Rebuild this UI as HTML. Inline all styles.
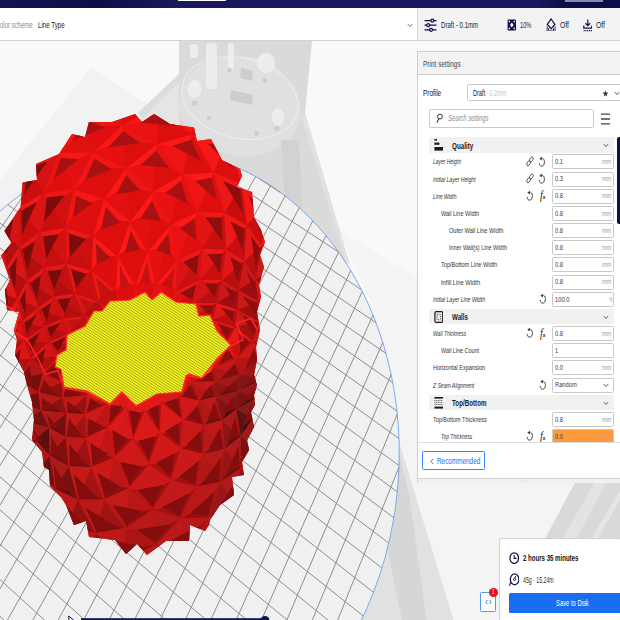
<!DOCTYPE html>
<html><head><meta charset="utf-8"><title>Cura</title>
<style>
html,body{margin:0;padding:0;}
body{width:620px;height:620px;overflow:hidden;position:relative;background:#f8f8f8;font-family:"Liberation Sans",sans-serif;}
.a{position:absolute;}
.t{position:absolute;white-space:nowrap;transform-origin:0 50%;line-height:12px;height:12px;}

</style></head><body>
<svg width="620" height="620" viewBox="0 0 620 620" style="position:absolute;left:0;top:0">
<defs><pattern id="fine" width="1" height="1" patternUnits="userSpaceOnUse" patternTransform="matrix(1.75,1.26,-0.95,2.05,0,0)"><rect width="1" height="1" fill="#f3f3f3"/><path d="M0 0H1M0 0V1" stroke="#e8e8e8" stroke-width="0.25"/></pattern>
<pattern id="yl" width="2.3" height="2.3" patternUnits="userSpaceOnUse" patternTransform="rotate(33)"><rect width="2.3" height="2.3" fill="#f2f220"/><rect width="2.3" height="0.6" fill="#8a8a10"/></pattern>
<clipPath id="blobclip"><polygon points="0.6,256.0 11.6,243.0 4.5,231.0 20.6,207.0 22.6,182.6 37.0,180.0 36.0,164.0 59.0,154.0 72.0,134.0 85.0,137.0 89.0,122.0 112.0,122.0 135.0,114.0 142.0,122.0 154.0,114.0 170.0,124.0 194.0,127.5 197.0,141.0 211.0,139.0 222.0,160.0 240.0,169.0 242.0,176.0 237.0,187.0 252.0,192.0 254.0,217.0 261.0,230.0 265.0,242.0 260.0,255.0 264.0,267.0 259.0,285.0 261.0,297.0 257.0,312.0 260.0,330.0 256.0,347.0 257.0,360.0 254.0,375.0 257.0,385.0 254.0,395.0 255.0,405.0 251.0,412.0 254.0,427.0 247.0,440.0 249.0,450.0 242.0,462.0 244.0,475.0 232.0,477.0 234.0,495.0 220.0,505.0 210.0,520.0 209.0,525.0 205.0,531.0 190.0,525.0 189.0,541.0 166.0,541.0 147.0,555.0 137.0,544.0 126.0,554.0 115.0,540.0 89.0,537.0 86.0,521.0 74.0,525.0 66.0,505.0 61.0,497.0 50.0,486.0 49.0,470.0 44.0,467.0 42.0,452.0 32.0,440.0 34.0,420.0 32.0,402.0 27.0,385.0 24.0,372.0 15.0,355.0 17.0,340.0 14.0,330.0 19.0,312.0 7.0,310.0 5.0,290.0 10.0,280.0 1.0,255.0"/></clipPath>
</defs>
<rect width="620" height="620" fill="#f9f9f9"/>
<polygon points="338,229 620,402 620,620 340,620 400,460 370,300" fill="#f4f4f4"/><polygon points="91.6,67 0,180 0,262 60,200 150,106" fill="#f2f2f2"/><polygon points="179,82 179,135 120,128 142.4,118" fill="#e5e5e5"/><polygon points="179,74 179,82.5 142.4,118.5 138,112.7" fill="#dcdcdc"/><polygon points="179,40.5 312,40.5 305,113 349.7,264.5 300,230 240,170 179,135" fill="#dadada"/><polygon points="305,113 349.7,264.5 346,262 301.5,118" fill="#e1e1e1"/><ellipse cx="240" cy="106" rx="61" ry="50" transform="rotate(12 240 106)" fill="#e0e0e0"/><ellipse cx="240" cy="98" rx="59" ry="40" transform="rotate(14 240 98)" fill="none" stroke="#ebebeb" stroke-width="1.2"/><polygon points="281,140 299,140 303,225 285,205" fill="#d2d2d2"/><g fill="#ededed"><rect x="206" y="43" width="11" height="46" rx="4"/><rect x="228" y="43" width="6" height="27" rx="3"/><ellipse cx="194.5" cy="89" rx="7" ry="9"/><ellipse cx="266" cy="63" rx="9" ry="10"/><ellipse cx="278" cy="117" rx="6" ry="9"/><rect x="190" y="44" width="8" height="14" rx="3"/></g><g fill="#cdcdcd"><polygon points="241,68 253,71 252,81 240,78"/><polygon points="231,90 253,95 252,105 230,100"/><circle cx="194.5" cy="103" r="2.6"/><circle cx="209" cy="118" r="2.2"/><circle cx="256.5" cy="133.5" r="2.4"/><circle cx="277" cy="128.5" r="2.6"/><circle cx="264.5" cy="80.5" r="2.4"/><circle cx="229.5" cy="70" r="2.2"/></g><polygon points="396,430 398.5,440 453.5,620 340,620 392,540" fill="#e1e1e1"/><polygon points="399,452 403,470 409.5,496 426.5,620 402,620 388,552 394,500" fill="#d6d6d6"/><polygon points="574.8,483 620,483 620,538 545.5,538" fill="#d9d9d9"/><polygon points="594,483 606,483 577,538 563,538" fill="#e3e3e3"/><polygon points="620,490 620,500 598,538 592,538" fill="#e6e6e6"/>
<polygon points="373.3,592.8 366.5,609.0 359.0,625.0 350.7,640.5 341.6,655.5 331.8,670.0 321.2,683.9 310.0,697.1 298.1,709.5 285.6,721.2 272.5,732.0 258.8,741.8 244.7,750.7 230.1,758.6 215.2,765.4 199.9,771.0 184.4,775.6 168.8,778.9 153.0,781.1 137.1,782.0 121.3,781.8 105.5,780.3 89.9,777.6 74.6,773.8 59.5,768.8 44.8,762.7 30.5,755.4 16.7,747.1 3.4,737.8 -9.4,727.6 -21.5,716.5 -32.9,704.5 -43.7,691.7 -53.8,678.2 -63.1,664.1 -71.6,649.4 -79.3,634.2 -86.3,618.5 -92.4,602.5 -97.8,586.1 -102.3,569.5 -106.1,552.7 -109.0,535.8 -111.2,518.8 -112.5,501.9 -113.2,484.9 -113.1,468.1 -112.3,451.4 -110.7,434.8 -108.5,418.5 -105.7,402.5 -102.2,386.8 -98.1,371.4 -93.5,356.4 -88.3,341.8 -82.6,327.6 -76.3,313.8 -69.6,300.5 -62.5,287.7 -54.9,275.4 -47.0,263.6 -38.6,252.4 -29.9,241.7 -20.9,231.5 -11.6,221.9 -2.0,212.9 7.8,204.5 17.9,196.7 28.2,189.4 38.7,182.8 49.3,176.7 60.1,171.3 71.1,166.5 82.1,162.2 93.3,158.6 104.5,155.7 115.8,153.3 127.1,151.5 138.5,150.4 149.8,149.9 161.2,150.0 172.5,150.7 183.7,152.1 194.9,154.1 206.0,156.7 217.0,159.9 227.9,163.7 238.6,168.1 249.2,173.2 259.6,178.8 269.8,185.1 279.7,192.0 289.5,199.4 299.0,207.5 308.1,216.1 317.0,225.4 325.6,235.2 333.8,245.5 341.7,256.5 349.1,267.9 356.2,279.9 362.8,292.4 368.9,305.4 374.5,318.9 379.6,332.9 384.2,347.3 388.2,362.1 391.7,377.3 394.5,392.8 396.7,408.7 398.2,424.8 399.1,441.3 399.2,457.9 398.6,474.7 397.3,491.6 395.3,508.6 392.4,525.6 388.8,542.6 384.5,559.5 379.3,576.2" fill="url(#fine)" stroke="#6ea3ee" stroke-width="0.9"/>
<g stroke="#8e8e8e" stroke-width="1"><line x1="-26.9" y1="238.1" x2="-65.0" y2="292.0"/><line x1="27.1" y1="190.2" x2="-97.7" y2="369.8"/><line x1="60.0" y1="171.4" x2="-108.5" y2="418.3"/><line x1="87.0" y1="160.6" x2="-112.7" y2="458.7"/><line x1="110.9" y1="154.2" x2="-112.9" y2="494.5"/><line x1="132.7" y1="150.9" x2="-110.2" y2="527.2"/><line x1="153.0" y1="149.9" x2="-105.1" y2="557.4"/><line x1="172.1" y1="150.7" x2="-98.0" y2="585.5"/><line x1="190.2" y1="153.2" x2="-89.0" y2="611.8"/><line x1="207.5" y1="157.0" x2="-78.3" y2="636.3"/><line x1="224.1" y1="162.3" x2="-66.1" y2="659.1"/><line x1="240.2" y1="168.8" x2="-52.3" y2="680.2"/><line x1="255.6" y1="176.6" x2="-37.1" y2="699.7"/><line x1="270.6" y1="185.7" x2="-20.5" y2="717.4"/><line x1="285.1" y1="196.0" x2="-2.4" y2="733.4"/><line x1="299.2" y1="207.7" x2="17.0" y2="747.4"/><line x1="312.8" y1="220.9" x2="37.9" y2="759.3"/><line x1="326.0" y1="235.6" x2="60.2" y2="769.0"/><line x1="338.6" y1="252.1" x2="83.9" y2="776.3"/><line x1="350.8" y1="270.6" x2="109.1" y2="780.7"/><line x1="362.3" y1="291.5" x2="135.9" y2="782.0"/><line x1="373.0" y1="315.1" x2="164.4" y2="779.6"/><line x1="382.8" y1="342.4" x2="194.8" y2="772.7"/><line x1="391.1" y1="374.6" x2="227.5" y2="759.9"/><line x1="397.3" y1="414.0" x2="263.4" y2="738.7"/><line x1="399.0" y1="467.0" x2="304.6" y2="702.9"/><line x1="259.0" y1="178.5" x2="280.3" y2="192.4"/><line x1="188.2" y1="152.8" x2="338.6" y2="252.1"/><line x1="152.4" y1="149.9" x2="361.3" y2="289.6"/><line x1="124.2" y1="151.9" x2="375.9" y2="322.6"/><line x1="99.9" y1="156.8" x2="385.9" y2="353.3"/><line x1="78.3" y1="163.6" x2="392.7" y2="382.6"/><line x1="58.6" y1="172.0" x2="396.9" y2="411.0"/><line x1="40.4" y1="181.7" x2="399.0" y2="438.5"/><line x1="23.5" y1="192.6" x2="399.0" y2="465.5"/><line x1="7.7" y1="204.6" x2="397.3" y2="491.9"/><line x1="-7.2" y1="217.7" x2="393.8" y2="517.7"/><line x1="-21.2" y1="231.8" x2="388.7" y2="543.1"/><line x1="-34.4" y1="247.0" x2="381.9" y2="568.0"/><line x1="-46.7" y1="263.3" x2="373.5" y2="592.3"/><line x1="-58.3" y1="280.7" x2="363.3" y2="616.0"/><line x1="-69.0" y1="299.4" x2="351.5" y2="639.1"/><line x1="-78.9" y1="319.3" x2="337.7" y2="661.4"/><line x1="-87.9" y1="340.7" x2="322.1" y2="682.8"/><line x1="-95.8" y1="363.6" x2="304.3" y2="703.2"/><line x1="-102.6" y1="388.3" x2="284.3" y2="722.3"/><line x1="-108.0" y1="415.1" x2="261.8" y2="739.8"/><line x1="-111.7" y1="444.3" x2="236.3" y2="755.4"/><line x1="-113.2" y1="476.6" x2="207.5" y2="768.4"/><line x1="-111.7" y1="512.8" x2="174.3" y2="777.9"/><line x1="-105.7" y1="554.7" x2="135.2" y2="782.1"/><line x1="-91.0" y1="606.5" x2="86.1" y2="776.8"/><line x1="-42.0" y1="693.9" x2="1.2" y2="736.2"/></g>
<polygon points="0.6,256.0 11.6,243.0 4.5,231.0 20.6,207.0 22.6,182.6 37.0,180.0 36.0,164.0 59.0,154.0 72.0,134.0 85.0,137.0 89.0,122.0 112.0,122.0 135.0,114.0 142.0,122.0 154.0,114.0 170.0,124.0 194.0,127.5 197.0,141.0 211.0,139.0 222.0,160.0 240.0,169.0 242.0,176.0 237.0,187.0 252.0,192.0 254.0,217.0 261.0,230.0 265.0,242.0 260.0,255.0 264.0,267.0 259.0,285.0 261.0,297.0 257.0,312.0 260.0,330.0 256.0,347.0 257.0,360.0 254.0,375.0 257.0,385.0 254.0,395.0 255.0,405.0 251.0,412.0 254.0,427.0 247.0,440.0 249.0,450.0 242.0,462.0 244.0,475.0 232.0,477.0 234.0,495.0 220.0,505.0 210.0,520.0 209.0,525.0 205.0,531.0 190.0,525.0 189.0,541.0 166.0,541.0 147.0,555.0 137.0,544.0 126.0,554.0 115.0,540.0 89.0,537.0 86.0,521.0 74.0,525.0 66.0,505.0 61.0,497.0 50.0,486.0 49.0,470.0 44.0,467.0 42.0,452.0 32.0,440.0 34.0,420.0 32.0,402.0 27.0,385.0 24.0,372.0 15.0,355.0 17.0,340.0 14.0,330.0 19.0,312.0 7.0,310.0 5.0,290.0 10.0,280.0 1.0,255.0" fill="#e51414"/><g clip-path="url(#blobclip)"><polygon points="227.2,357.0 208.7,355.5 226.6,343.3" fill="#e41919"/><polygon points="227.2,357.0 226.6,343.3 237.4,357.8" fill="#de1717"/><polygon points="227.2,357.0 237.4,357.8 214.8,368.1" fill="#b40f0f"/><polygon points="227.2,357.0 214.8,368.1 208.7,355.5" fill="#d31515"/><polygon points="233.5,357.5 227.1,348.8 219.0,363.9" fill="#8e0e0e"/><polygon points="206.2,377.5 189.0,370.4 214.8,368.1" fill="#ca1919"/><polygon points="206.2,377.5 214.8,368.1 215.7,381.5" fill="#a31313"/><polygon points="206.2,377.5 215.7,381.5 191.8,381.9" fill="#8f1111"/><polygon points="206.2,377.5 191.8,381.9 189.0,370.4" fill="#c21818"/><polygon points="213.9,380.7 211.3,372.0 196.3,379.9" fill="#860d0d"/><polygon points="189.5,392.4 172.1,377.5 191.8,381.9" fill="#ca1919"/><polygon points="189.5,392.4 191.8,381.9 199.1,400.7" fill="#9e1313"/><polygon points="189.5,392.4 199.1,400.7 179.4,396.2" fill="#7f0f0f"/><polygon points="189.5,392.4 179.4,396.2 172.1,377.5" fill="#ca1919"/><polygon points="197.3,399.1 189.3,384.8 183.1,394.6" fill="#860d0d"/><polygon points="173.4,404.7 157.3,378.3 179.4,396.2" fill="#d61919"/><polygon points="173.4,404.7 179.4,396.2 182.3,419.2" fill="#9a1010"/><polygon points="173.4,404.7 182.3,419.2 161.5,402.1" fill="#980f0f"/><polygon points="173.4,404.7 161.5,402.1 157.3,378.3" fill="#d61919"/><polygon points="180.6,416.4 176.5,398.8 165.4,402.1" fill="#860d0d"/><polygon points="155.0,412.9 146.4,376.9 161.5,402.1" fill="#e21919"/><polygon points="155.0,412.9 161.5,402.1 159.7,432.7" fill="#ab0f0f"/><polygon points="155.0,412.9 159.7,432.7 144.6,410.2" fill="#b11010"/><polygon points="155.0,412.9 144.6,410.2 146.4,376.9" fill="#e21919"/><polygon points="158.8,429.0 158.7,404.8 148.4,409.8" fill="#860d0d"/><polygon points="134.5,418.6 137.5,381.3 144.6,410.2" fill="#e21919"/><polygon points="134.5,418.6 144.6,410.2 132.9,439.0" fill="#a70e0e"/><polygon points="134.5,418.6 132.9,439.0 126.3,406.8" fill="#c01212"/><polygon points="134.5,418.6 126.3,406.8 137.5,381.3" fill="#e21919"/><polygon points="133.2,435.1 140.9,412.6 129.3,410.5" fill="#860d0d"/><polygon points="114.9,410.4 127.5,380.0 126.3,406.8" fill="#dc1818"/><polygon points="114.9,410.4 126.3,406.8 107.9,427.2" fill="#a70e0e"/><polygon points="114.9,410.4 107.9,427.2 106.7,404.2" fill="#c41313"/><polygon points="114.9,410.4 106.7,404.2 127.5,380.0" fill="#e21919"/><polygon points="109.2,424.0 122.7,406.1 110.6,405.3" fill="#860d0d"/><polygon points="93.2,404.7 108.0,387.3 106.7,404.2" fill="#bf1515"/><polygon points="93.2,404.7 106.7,404.2 85.0,414.2" fill="#940e0e"/><polygon points="93.2,404.7 85.0,414.2 86.8,395.3" fill="#ca1717"/><polygon points="93.2,404.7 86.8,395.3 108.0,387.3" fill="#d41919"/><polygon points="86.5,412.4 101.4,404.7 90.2,398.1" fill="#860d0d"/><polygon points="70.5,392.5 86.4,382.8 86.8,395.3" fill="#a11313"/><polygon points="70.5,392.5 86.8,395.3 61.8,397.8" fill="#810e0e"/><polygon points="70.5,392.5 61.8,397.8 62.5,382.0" fill="#c81919"/><polygon points="70.5,392.5 62.5,382.0 86.4,382.8" fill="#c81919"/><polygon points="63.4,396.8 81.2,394.0 65.8,386.2" fill="#860d0d"/><polygon points="52.8,370.8 70.9,366.5 62.5,382.0" fill="#8f1010"/><polygon points="52.8,370.8 62.5,382.0 42.8,373.2" fill="#830e0e"/><polygon points="52.8,370.8 42.8,373.2 57.2,356.4" fill="#c81919"/><polygon points="52.8,370.8 57.2,356.4 70.9,366.5" fill="#b61616"/><polygon points="44.7,372.7 58.4,377.8 55.6,361.9" fill="#860d0d"/><polygon points="58.3,343.4 76.8,344.9 57.2,356.4" fill="#b60e0e"/><polygon points="58.3,343.4 57.2,356.4 48.1,342.6" fill="#c51212"/><polygon points="58.3,343.4 48.1,342.6 69.5,333.0" fill="#e21919"/><polygon points="58.3,343.4 69.5,333.0 76.8,344.9" fill="#cb1313"/><polygon points="52.0,342.9 57.9,351.2 65.7,336.9" fill="#7a0c0c"/><polygon points="74.3,322.7 93.7,330.8 69.5,333.0" fill="#b40e0e"/><polygon points="74.3,322.7 69.5,333.0 63.6,318.2" fill="#d11515"/><polygon points="74.3,322.7 63.6,318.2 84.7,316.0" fill="#e21919"/><polygon points="74.3,322.7 84.7,316.0 93.7,330.8" fill="#c21111"/><polygon points="67.7,319.9 72.3,329.1 81.5,318.9" fill="#c41212"/><polygon points="86.6,304.3 109.6,323.9 84.7,316.0" fill="#b40e0e"/><polygon points="86.6,304.3 84.7,316.0 74.0,293.5" fill="#da1717"/><polygon points="86.6,304.3 74.0,293.5 98.6,301.4" fill="#e21919"/><polygon points="86.6,304.3 98.6,301.4 109.6,323.9" fill="#ba0f0f"/><polygon points="78.8,297.6 86.2,312.0 94.6,303.1" fill="#c41212"/><polygon points="102.6,288.7 122.5,321.4 98.6,301.4" fill="#c80e0e"/><polygon points="102.6,288.7 98.6,301.4 91.6,270.8" fill="#ee1919"/><polygon points="102.6,288.7 91.6,270.8 115.8,291.3" fill="#ee1919"/><polygon points="102.6,288.7 115.8,291.3 122.5,321.4" fill="#c90e0e"/><polygon points="95.8,277.6 100.9,297.7 111.2,291.0" fill="#c41212"/><polygon points="123.4,280.4 133.8,324.0 115.8,291.3" fill="#dd0e0e"/><polygon points="123.4,280.4 115.8,291.3 117.7,256.4" fill="#fc1919"/><polygon points="123.4,280.4 117.7,256.4 135.1,286.1" fill="#fc1919"/><polygon points="123.4,280.4 135.1,286.1 133.8,324.0" fill="#dc0e0e"/><polygon points="119.9,265.6 120.2,288.6 130.0,286.0" fill="#c41212"/><polygon points="145.9,276.1 142.3,320.9 135.1,286.1" fill="#e00f0f"/><polygon points="145.9,276.1 135.1,286.1 147.9,251.4" fill="#fc1919"/><polygon points="145.9,276.1 147.9,251.4 155.6,285.5" fill="#f81717"/><polygon points="145.9,276.1 155.6,285.5 142.3,320.9" fill="#dd0e0e"/><polygon points="147.2,260.8 140.1,283.1 150.6,283.5" fill="#c41212"/><polygon points="169.0,280.3 153.7,317.1 155.6,285.5" fill="#e51111"/><polygon points="169.0,280.3 155.6,285.5 177.4,260.1" fill="#fc1919"/><polygon points="169.0,280.3 177.4,260.1 175.7,291.9" fill="#f01515"/><polygon points="169.0,280.3 175.7,291.9 153.7,317.1" fill="#df0f0f"/><polygon points="174.2,267.9 161.2,285.0 171.8,287.8" fill="#c41212"/><polygon points="189.3,292.4 169.7,315.4 175.7,291.9" fill="#da1313"/><polygon points="189.3,292.4 175.7,291.9 200.1,279.8" fill="#f01919"/><polygon points="189.3,292.4 200.1,279.8 195.3,302.9" fill="#d61212"/><polygon points="189.3,292.4 195.3,302.9 169.7,315.4" fill="#cc1010"/><polygon points="196.0,284.6 180.1,293.1 192.4,299.4" fill="#8e0e0e"/><polygon points="207.7,308.6 191.5,318.6 195.3,302.9" fill="#d81616"/><polygon points="207.7,308.6 195.3,302.9 216.7,303.1" fill="#e41919"/><polygon points="207.7,308.6 216.7,303.1 213.0,319.9" fill="#b71010"/><polygon points="207.7,308.6 213.0,319.9 191.5,318.6" fill="#bb1010"/><polygon points="213.3,305.2 199.6,305.4 210.1,315.8" fill="#8e0e0e"/><polygon points="225.4,329.6 207.3,334.0 213.0,319.9" fill="#e11818"/><polygon points="225.4,329.6 213.0,319.9 235.3,327.3" fill="#e41919"/><polygon points="225.4,329.6 235.3,327.3 226.6,343.3" fill="#b00e0e"/><polygon points="225.4,329.6 226.6,343.3 207.3,334.0" fill="#c21212"/><polygon points="231.5,328.2 217.6,323.6 226.3,337.8" fill="#8e0e0e"/><polygon points="231.5,372.1 214.8,368.1 237.4,357.8" fill="#c21919"/><polygon points="231.5,372.1 237.4,357.8 240.7,374.3" fill="#ad1616"/><polygon points="231.5,372.1 240.7,374.3 215.7,381.5" fill="#861111"/><polygon points="231.5,372.1 215.7,381.5 214.8,368.1" fill="#af1616"/><polygon points="238.9,373.9 234.5,363.6 221.7,378.1" fill="#860d0d"/><polygon points="207.4,391.5 191.8,381.9 215.7,381.5" fill="#c21919"/><polygon points="207.4,391.5 215.7,381.5 216.0,396.8" fill="#9a1313"/><polygon points="207.4,391.5 216.0,396.8 199.1,400.7" fill="#750e0e"/><polygon points="207.4,391.5 199.1,400.7 191.8,381.9" fill="#b71717"/><polygon points="214.4,395.7 211.0,384.9 201.4,396.3" fill="#860d0d"/><polygon points="195.2,414.8 179.4,396.2 199.1,400.7" fill="#ce1919"/><polygon points="195.2,414.8 199.1,400.7 203.9,425.1" fill="#ab1313"/><polygon points="195.2,414.8 203.9,425.1 182.3,419.2" fill="#900f0f"/><polygon points="195.2,414.8 182.3,419.2 179.4,396.2" fill="#ce1919"/><polygon points="202.2,423.1 197.4,405.8 187.0,417.1" fill="#860d0d"/><polygon points="173.8,431.8 161.5,402.1 182.3,419.2" fill="#da1919"/><polygon points="173.8,431.8 182.3,419.2 180.5,448.2" fill="#ac1010"/><polygon points="173.8,431.8 180.5,448.2 159.7,432.7" fill="#aa1010"/><polygon points="173.8,431.8 159.7,432.7 161.5,402.1" fill="#da1919"/><polygon points="179.2,445.0 178.5,423.0 164.9,431.3" fill="#860d0d"/><polygon points="147.3,445.1 144.6,410.2 159.7,432.7" fill="#da1919"/><polygon points="147.3,445.1 159.7,432.7 148.8,464.3" fill="#a60f0f"/><polygon points="147.3,445.1 148.8,464.3 132.9,439.0" fill="#b61212"/><polygon points="147.3,445.1 132.9,439.0 144.6,410.2" fill="#da1919"/><polygon points="148.5,460.5 155.0,436.5 138.4,440.7" fill="#860d0d"/><polygon points="118.4,439.5 126.3,406.8 132.9,439.0" fill="#d51818"/><polygon points="118.4,439.5 132.9,439.0 114.0,457.4" fill="#9e0e0e"/><polygon points="118.4,439.5 114.0,457.4 107.9,427.2" fill="#c51515"/><polygon points="118.4,439.5 107.9,427.2 126.3,406.8" fill="#da1919"/><polygon points="114.9,453.9 127.3,438.6 112.4,430.1" fill="#860d0d"/><polygon points="93.3,426.0 106.7,404.2 107.9,427.2" fill="#ba1616"/><polygon points="93.3,426.0 107.9,427.2 85.9,438.0" fill="#8b0e0e"/><polygon points="93.3,426.0 85.9,438.0 85.0,414.2" fill="#c21717"/><polygon points="93.3,426.0 85.0,414.2 106.7,404.2" fill="#cc1919"/><polygon points="87.4,435.6 102.6,426.1 88.4,418.6" fill="#860d0d"/><polygon points="73.5,406.7 86.8,395.3 85.0,414.2" fill="#961212"/><polygon points="73.5,406.7 85.0,414.2 66.2,412.9" fill="#760e0e"/><polygon points="73.5,406.7 66.2,412.9 61.8,397.8" fill="#bb1818"/><polygon points="73.5,406.7 61.8,397.8 86.8,395.3" fill="#c01919"/><polygon points="67.6,411.6 81.0,410.8 67.1,401.1" fill="#860d0d"/><polygon points="46.6,388.5 62.5,382.0 61.8,397.8" fill="#8c1111"/><polygon points="46.6,388.5 61.8,397.8 37.9,392.1" fill="#760e0e"/><polygon points="46.6,388.5 37.9,392.1 42.8,373.2" fill="#c01919"/><polygon points="46.6,388.5 42.8,373.2 62.5,382.0" fill="#bd1818"/><polygon points="39.6,391.4 55.8,394.4 43.9,379.4" fill="#860d0d"/><polygon points="40.0,357.7 57.2,356.4 42.8,373.2" fill="#b70f0f"/><polygon points="40.0,357.7 42.8,373.2 30.6,358.4" fill="#bc1010"/><polygon points="40.0,357.7 30.6,358.4 48.1,342.6" fill="#e21919"/><polygon points="40.0,357.7 48.1,342.6 57.2,356.4" fill="#d31515"/><polygon points="34.3,358.2 41.7,367.0 45.1,348.4" fill="#7a0c0c"/><polygon points="52.7,328.9 69.5,333.0 48.1,342.6" fill="#b40e0e"/><polygon points="52.7,328.9 48.1,342.6 43.5,326.7" fill="#c81313"/><polygon points="52.7,328.9 43.5,326.7 63.6,318.2" fill="#e21919"/><polygon points="52.7,328.9 63.6,318.2 69.5,333.0" fill="#ca1313"/><polygon points="47.2,327.6 50.6,337.1 60.5,322.7" fill="#7a0c0c"/><polygon points="64.4,303.5 84.7,316.0 63.6,318.2" fill="#b40e0e"/><polygon points="64.4,303.5 63.6,318.2 53.3,296.7" fill="#cb1313"/><polygon points="64.4,303.5 53.3,296.7 74.0,293.5" fill="#e21919"/><polygon points="64.4,303.5 74.0,293.5 84.7,316.0" fill="#c11111"/><polygon points="57.7,299.4 64.7,313.0 70.6,297.7" fill="#7a0c0c"/><polygon points="77.9,277.1 98.6,301.4 74.0,293.5" fill="#c80e0e"/><polygon points="77.9,277.1 74.0,293.5 66.5,263.7" fill="#e41616"/><polygon points="77.9,277.1 66.5,263.7 91.6,270.8" fill="#ee1919"/><polygon points="77.9,277.1 91.6,270.8 98.6,301.4" fill="#cd0f0f"/><polygon points="71.0,269.0 76.1,287.9 86.7,273.9" fill="#7a0c0c"/><polygon points="101.0,255.6 115.8,291.3 91.6,270.8" fill="#dd0e0e"/><polygon points="101.0,255.6 91.6,270.8 92.9,235.9" fill="#fb1818"/><polygon points="101.0,255.6 92.9,235.9 117.7,256.4" fill="#fc1919"/><polygon points="101.0,255.6 117.7,256.4 115.8,291.3" fill="#dc0e0e"/><polygon points="96.1,243.6 96.7,264.7 110.2,257.7" fill="#a81111"/><polygon points="131.9,244.6 135.1,286.1 117.7,256.4" fill="#df0f0f"/><polygon points="131.9,244.6 117.7,256.4 130.1,221.8" fill="#fc1919"/><polygon points="131.9,244.6 130.1,221.8 147.9,251.4" fill="#f71717"/><polygon points="131.9,244.6 147.9,251.4 135.1,286.1" fill="#dc0e0e"/><polygon points="130.8,230.8 124.8,252.9 140.1,249.6" fill="#a81111"/><polygon points="165.0,246.5 155.6,285.5 147.9,251.4" fill="#e41111"/><polygon points="165.0,246.5 147.9,251.4 170.2,225.0" fill="#fc1919"/><polygon points="165.0,246.5 170.2,225.0 177.4,260.1" fill="#ef1414"/><polygon points="165.0,246.5 177.4,260.1 155.6,285.5" fill="#dd0e0e"/><polygon points="168.2,233.5 155.9,250.6 170.9,255.5" fill="#a81111"/><polygon points="192.8,264.1 175.7,291.9 177.4,260.1" fill="#d91313"/><polygon points="192.8,264.1 177.4,260.1 202.2,248.8" fill="#f01919"/><polygon points="192.8,264.1 202.2,248.8 200.1,279.8" fill="#d21111"/><polygon points="192.8,264.1 200.1,279.8 175.7,291.9" fill="#c90f0f"/><polygon points="198.5,254.8 183.3,261.9 196.6,274.8" fill="#8e0e0e"/><polygon points="212.6,288.2 195.3,302.9 200.1,279.8" fill="#d61616"/><polygon points="212.6,288.2 200.1,279.8 222.1,280.1" fill="#e41919"/><polygon points="212.6,288.2 222.1,280.1 216.7,303.1" fill="#b50f0f"/><polygon points="212.6,288.2 216.7,303.1 195.3,302.9" fill="#b91010"/><polygon points="218.3,283.3 204.9,283.2 214.5,297.8" fill="#8e0e0e"/><polygon points="228.9,313.3 213.0,319.9 216.7,303.1" fill="#e01818"/><polygon points="228.9,313.3 216.7,303.1 237.6,309.7" fill="#e41919"/><polygon points="228.9,313.3 237.6,309.7 235.3,327.3" fill="#b30f0f"/><polygon points="228.9,313.3 235.3,327.3 213.0,319.9" fill="#ba1010"/><polygon points="234.2,311.2 220.7,307.4 232.6,321.6" fill="#8e0e0e"/><polygon points="243.8,342.0 226.6,343.3 235.3,327.3" fill="#e41919"/><polygon points="243.8,342.0 235.3,327.3 253.2,341.3" fill="#e41919"/><polygon points="243.8,342.0 253.2,341.3 237.4,357.8" fill="#af0e0e"/><polygon points="243.8,342.0 237.4,357.8 226.6,343.3" fill="#c81313"/><polygon points="249.5,341.5 239.0,332.9 240.3,351.7" fill="#8e0e0e"/><polygon points="253.2,359.1 237.4,357.8 253.2,341.3" fill="#cb1919"/><polygon points="253.2,359.1 253.2,341.3 261.8,359.8" fill="#c91818"/><polygon points="253.2,359.1 261.8,359.8 240.7,374.3" fill="#9c0f0f"/><polygon points="253.2,359.1 240.7,374.3 237.4,357.8" fill="#b51414"/><polygon points="258.5,359.5 253.6,348.4 245.1,368.5" fill="#8e0e0e"/><polygon points="230.3,387.5 215.7,381.5 240.7,374.3" fill="#a11919"/><polygon points="230.3,387.5 240.7,374.3 238.3,390.9" fill="#831515"/><polygon points="230.3,387.5 238.3,390.9 216.0,396.8" fill="#611010"/><polygon points="230.3,387.5 216.0,396.8 215.7,381.5" fill="#901616"/><polygon points="236.7,390.2 236.6,379.9 219.7,392.4" fill="#860d0d"/><polygon points="214.0,413.4 199.1,400.7 216.0,396.8" fill="#ba1919"/><polygon points="214.0,413.4 216.0,396.8 222.1,420.3" fill="#a91616"/><polygon points="214.0,413.4 222.1,420.3 203.9,425.1" fill="#6f0f0f"/><polygon points="214.0,413.4 203.9,425.1 199.1,400.7" fill="#b01717"/><polygon points="220.5,419.0 214.2,402.3 207.6,420.0" fill="#860d0d"/><polygon points="195.9,441.6 182.3,419.2 203.9,425.1" fill="#c61919"/><polygon points="195.9,441.6 203.9,425.1 203.5,453.9" fill="#a11313"/><polygon points="195.9,441.6 203.5,453.9 180.5,448.2" fill="#8b1010"/><polygon points="195.9,441.6 180.5,448.2 182.3,419.2" fill="#c61919"/><polygon points="202.0,451.5 200.6,431.0 186.3,444.9" fill="#860d0d"/><polygon points="167.0,463.4 159.7,432.7 180.5,448.2" fill="#d21919"/><polygon points="167.0,463.4 180.5,448.2 171.0,480.2" fill="#a71111"/><polygon points="167.0,463.4 171.0,480.2 148.8,464.3" fill="#aa1111"/><polygon points="167.0,463.4 148.8,464.3 159.7,432.7" fill="#d21919"/><polygon points="170.3,476.9 175.1,453.1 155.9,462.8" fill="#860d0d"/><polygon points="130.3,470.7 132.9,439.0 148.8,464.3" fill="#cf1818"/><polygon points="130.3,470.7 148.8,464.3 128.9,488.1" fill="#9b0f0f"/><polygon points="130.3,470.7 128.9,488.1 114.0,457.4" fill="#c11616"/><polygon points="130.3,470.7 114.0,457.4 132.9,439.0" fill="#d21919"/><polygon points="129.2,484.8 141.7,466.2 120.3,461.9" fill="#860d0d"/><polygon points="97.1,453.1 107.9,427.2 114.0,457.4" fill="#c21616"/><polygon points="97.1,453.1 114.0,457.4 91.2,467.3" fill="#950e0e"/><polygon points="97.1,453.1 91.2,467.3 85.9,438.0" fill="#cb1717"/><polygon points="97.1,453.1 85.9,438.0 107.9,427.2" fill="#d21919"/><polygon points="92.4,464.5 107.8,454.2 90.6,443.0" fill="#860d0d"/><polygon points="72.3,429.0 85.0,414.2 85.9,438.0" fill="#a11313"/><polygon points="72.3,429.0 85.9,438.0 65.4,437.1" fill="#820e0e"/><polygon points="72.3,429.0 65.4,437.1 66.2,412.9" fill="#c41919"/><polygon points="72.3,429.0 66.2,412.9 85.0,414.2" fill="#c41919"/><polygon points="66.7,435.5 80.6,434.2 69.1,418.5" fill="#860d0d"/><polygon points="48.3,406.0 61.8,397.8 66.2,412.9" fill="#891212"/><polygon points="48.3,406.0 66.2,412.9 40.9,410.6" fill="#6f0e0e"/><polygon points="48.3,406.0 40.9,410.6 37.9,392.1" fill="#b81919"/><polygon points="48.3,406.0 37.9,392.1 61.8,397.8" fill="#b81919"/><polygon points="42.3,409.7 60.0,409.9 41.9,397.9" fill="#860d0d"/><polygon points="27.5,376.8 42.8,373.2 37.9,392.1" fill="#780f0f"/><polygon points="27.5,376.8 37.9,392.1 19.0,378.9" fill="#6f0e0e"/><polygon points="27.5,376.8 19.0,378.9 30.6,358.4" fill="#b81919"/><polygon points="27.5,376.8 30.6,358.4 42.8,373.2" fill="#ad1717"/><polygon points="20.6,378.5 33.2,386.4 29.4,365.6" fill="#860d0d"/><polygon points="32.3,341.4 48.1,342.6 30.6,358.4" fill="#b40e0e"/><polygon points="32.3,341.4 30.6,358.4 23.6,340.7" fill="#c01111"/><polygon points="32.3,341.4 23.6,340.7 43.5,326.7" fill="#e21919"/><polygon points="32.3,341.4 43.5,326.7 48.1,342.6" fill="#d01414"/><polygon points="27.0,340.9 31.3,351.5 39.6,332.3" fill="#7a0c0c"/><polygon points="47.1,311.4 63.6,318.2 43.5,326.7" fill="#b30e0e"/><polygon points="47.1,311.4 43.5,326.7 38.0,307.6" fill="#c71212"/><polygon points="47.1,311.4 38.0,307.6 53.3,296.7" fill="#e21919"/><polygon points="47.1,311.4 53.3,296.7 63.6,318.2" fill="#cc1414"/><polygon points="41.5,309.0 46.9,321.2 51.0,302.7" fill="#7a0c0c"/><polygon points="54.5,276.7 74.0,293.5 53.3,296.7" fill="#b30e0e"/><polygon points="54.5,276.7 53.3,296.7 43.8,267.6" fill="#c71212"/><polygon points="54.5,276.7 43.8,267.6 66.5,263.7" fill="#e21919"/><polygon points="54.5,276.7 66.5,263.7 74.0,293.5" fill="#c11111"/><polygon points="47.9,271.1 54.1,289.5 62.1,269.4" fill="#7a0c0c"/><polygon points="74.6,243.0 91.6,270.8 66.5,263.7" fill="#c90e0e"/><polygon points="74.6,243.0 66.5,263.7 65.3,227.7" fill="#e21515"/><polygon points="74.6,243.0 65.3,227.7 92.9,235.9" fill="#ee1919"/><polygon points="74.6,243.0 92.9,235.9 91.6,270.8" fill="#cc0f0f"/><polygon points="68.9,233.6 69.9,256.4 85.8,239.0" fill="#7a0c0c"/><polygon points="108.8,219.3 117.7,256.4 92.9,235.9" fill="#df0f0f"/><polygon points="108.8,219.3 92.9,235.9 104.0,199.0" fill="#fa1818"/><polygon points="108.8,219.3 104.0,199.0 130.1,221.8" fill="#f61717"/><polygon points="108.8,219.3 130.1,221.8 117.7,256.4" fill="#dc0e0e"/><polygon points="105.8,206.8 101.0,229.4 120.0,222.6" fill="#a81111"/><polygon points="151.0,213.3 147.9,251.4 130.1,221.8" fill="#e31010"/><polygon points="151.0,213.3 130.1,221.8 152.6,192.3" fill="#fc1919"/><polygon points="151.0,213.3 152.6,192.3 170.2,225.0" fill="#ee1414"/><polygon points="151.0,213.3 170.2,225.0 147.9,251.4" fill="#dc0e0e"/><polygon points="152.0,200.4 140.2,218.9 160.7,220.5" fill="#a81111"/><polygon points="190.4,228.9 177.4,260.1 170.2,225.0" fill="#ea1313"/><polygon points="190.4,228.9 170.2,225.0 197.5,211.8" fill="#fc1919"/><polygon points="190.4,228.9 197.5,211.8 202.2,248.8" fill="#e41111"/><polygon points="190.4,228.9 202.2,248.8 177.4,260.1" fill="#de0f0f"/><polygon points="194.7,218.4 179.7,228.4 196.3,240.0" fill="#a81111"/><polygon points="216.8,260.3 200.1,279.8 202.2,248.8" fill="#e31515"/><polygon points="216.8,260.3 202.2,248.8 226.0,249.6" fill="#f01919"/><polygon points="216.8,260.3 226.0,249.6 222.1,280.1" fill="#c70f0f"/><polygon points="216.8,260.3 222.1,280.1 200.1,279.8" fill="#ca0f0f"/><polygon points="222.4,253.8 207.7,254.0 219.8,272.9" fill="#8e0e0e"/><polygon points="230.6,294.7 216.7,303.1 222.1,280.1" fill="#ca1818"/><polygon points="230.6,294.7 222.1,280.1 238.2,290.0" fill="#cb1919"/><polygon points="230.6,294.7 238.2,290.0 237.6,309.7" fill="#990f0f"/><polygon points="230.6,294.7 237.6,309.7 216.7,303.1" fill="#9d0f0f"/><polygon points="235.2,291.8 225.2,286.2 234.0,304.1" fill="#8e0e0e"/><polygon points="250.7,323.6 235.3,327.3 237.6,309.7" fill="#cb1919"/><polygon points="250.7,323.6 237.6,309.7 259.1,321.6" fill="#cb1919"/><polygon points="250.7,323.6 259.1,321.6 253.2,341.3" fill="#960e0e"/><polygon points="250.7,323.6 253.2,341.3 235.3,327.3" fill="#a41111"/><polygon points="255.9,322.4 242.7,315.0 252.6,334.1" fill="#8e0e0e"/><polygon points="254.9,377.8 240.7,374.3 261.8,359.8" fill="#991919"/><polygon points="254.9,377.8 261.8,359.8 262.4,379.6" fill="#8c1717"/><polygon points="254.9,377.8 262.4,379.6 238.3,390.9" fill="#5c1111"/><polygon points="254.9,377.8 238.3,390.9 240.7,374.3" fill="#7f1515"/><polygon points="261.0,379.2 258.7,367.1 244.8,386.1" fill="#860d0d"/><polygon points="229.3,404.9 216.0,396.8 238.3,390.9" fill="#991919"/><polygon points="229.3,404.9 238.3,390.9 236.3,409.2" fill="#7d1515"/><polygon points="229.3,404.9 236.3,409.2 222.1,420.3" fill="#4b0e0e"/><polygon points="229.3,404.9 222.1,420.3 216.0,396.8" fill="#7d1515"/><polygon points="235.0,408.4 232.9,395.7 224.3,413.5" fill="#860d0d"/><polygon points="217.3,440.8 203.9,425.1 222.1,420.3" fill="#be1919"/><polygon points="217.3,440.8 222.1,420.3 224.5,449.2" fill="#b01717"/><polygon points="217.3,440.8 224.5,449.2 203.5,453.9" fill="#801010"/><polygon points="217.3,440.8 203.5,453.9 203.9,425.1" fill="#b71818"/><polygon points="223.1,447.6 220.1,427.9 208.9,448.3" fill="#860d0d"/><polygon points="190.9,473.4 180.5,448.2 203.5,453.9" fill="#ca1919"/><polygon points="190.9,473.4 203.5,453.9 196.4,486.8" fill="#ad1414"/><polygon points="190.9,473.4 196.4,486.8 171.0,480.2" fill="#9f1111"/><polygon points="190.9,473.4 171.0,480.2 180.5,448.2" fill="#ca1919"/><polygon points="195.4,484.2 198.5,460.9 178.8,476.8" fill="#860d0d"/><polygon points="151.1,493.8 148.8,464.3 171.0,480.2" fill="#ca1919"/><polygon points="151.1,493.8 171.0,480.2 152.3,509.6" fill="#9e1111"/><polygon points="151.1,493.8 152.3,509.6 128.9,488.1" fill="#b11414"/><polygon points="151.1,493.8 128.9,488.1 148.8,464.3" fill="#ca1919"/><polygon points="152.1,506.5 163.4,485.0 137.6,489.8" fill="#860d0d"/><polygon points="107.4,485.1 114.0,457.4 128.9,488.1" fill="#bc1616"/><polygon points="107.4,485.1 128.9,488.1 103.8,499.8" fill="#8f0e0e"/><polygon points="107.4,485.1 103.8,499.8 91.2,467.3" fill="#c61818"/><polygon points="107.4,485.1 91.2,467.3 114.0,457.4" fill="#ca1919"/><polygon points="104.5,497.0 120.4,486.6 97.6,473.1" fill="#860d0d"/><polygon points="74.6,456.4 85.9,438.0 91.2,467.3" fill="#9a1313"/><polygon points="74.6,456.4 91.2,467.3 68.5,466.2" fill="#790e0e"/><polygon points="74.6,456.4 68.5,466.2 65.4,437.1" fill="#bc1919"/><polygon points="74.6,456.4 65.4,437.1 85.9,438.0" fill="#bc1919"/><polygon points="69.7,464.4 84.7,462.5 69.2,444.1" fill="#860d0d"/><polygon points="54.9,422.4 66.2,412.9 65.4,437.1" fill="#761010"/><polygon points="54.9,422.4 65.4,437.1 48.9,427.5" fill="#650e0e"/><polygon points="54.9,422.4 48.9,427.5 40.9,410.6" fill="#b01919"/><polygon points="54.9,422.4 40.9,410.6 66.2,412.9" fill="#b01919"/><polygon points="50.1,426.6 61.4,430.8 47.1,415.1" fill="#860d0d"/><polygon points="24.4,397.7 37.9,392.1 40.9,410.6" fill="#751010"/><polygon points="24.4,397.7 40.9,410.6 17.3,400.6" fill="#640e0e"/><polygon points="24.4,397.7 17.3,400.6 19.0,378.9" fill="#b01919"/><polygon points="24.4,397.7 19.0,378.9 37.9,392.1" fill="#b01919"/><polygon points="18.6,400.1 34.2,405.8 20.6,386.6" fill="#860d0d"/><polygon points="16.1,359.6 30.6,358.4 19.0,378.9" fill="#b50e0e"/><polygon points="16.1,359.6 19.0,378.9 8.3,360.2" fill="#b90f0f"/><polygon points="16.1,359.6 8.3,360.2 23.6,340.7" fill="#e21919"/><polygon points="16.1,359.6 23.6,340.7 30.6,358.4" fill="#d81616"/><polygon points="11.3,359.9 17.6,371.2 20.7,348.0" fill="#7a0c0c"/><polygon points="29.4,323.3 43.5,326.7 23.6,340.7" fill="#b30e0e"/><polygon points="29.4,323.3 23.6,340.7 21.8,321.5" fill="#c41212"/><polygon points="29.4,323.3 21.8,321.5 38.0,307.6" fill="#e21919"/><polygon points="29.4,323.3 38.0,307.6 43.5,326.7" fill="#d11515"/><polygon points="24.7,322.2 26.4,333.7 36.8,314.5" fill="#7a0c0c"/><polygon points="36.1,286.1 53.3,296.7 38.0,307.6" fill="#b30e0e"/><polygon points="36.1,286.1 38.0,307.6 27.0,280.5" fill="#bd1010"/><polygon points="36.1,286.1 27.0,280.5 43.8,267.6" fill="#e21919"/><polygon points="36.1,286.1 43.8,267.6 53.3,296.7" fill="#cc1414"/><polygon points="30.5,282.7 37.2,299.5 40.9,275.3" fill="#7a0c0c"/><polygon points="49.0,243.2 66.5,263.7 43.8,267.6" fill="#c90e0e"/><polygon points="49.0,243.2 43.8,267.6 39.7,232.2" fill="#d81212"/><polygon points="49.0,243.2 39.7,232.2 65.3,227.7" fill="#ee1919"/><polygon points="49.0,243.2 65.3,227.7 66.5,263.7" fill="#d21111"/><polygon points="43.3,236.4 46.1,258.7 58.9,234.2" fill="#7a0c0c"/><polygon points="80.4,205.6 92.9,235.9 65.3,227.7" fill="#de0f0f"/><polygon points="80.4,205.6 65.3,227.7 73.8,189.5" fill="#f21515"/><polygon points="80.4,205.6 73.8,189.5 104.0,199.0" fill="#f81717"/><polygon points="80.4,205.6 104.0,199.0 92.9,235.9" fill="#de0f0f"/><polygon points="76.4,195.7 72.8,217.6 92.5,203.2" fill="#a81111"/><polygon points="127.4,186.7 130.1,221.8 104.0,199.0" fill="#e21010"/><polygon points="127.4,186.7 104.0,199.0 125.9,168.0" fill="#fb1818"/><polygon points="127.4,186.7 125.9,168.0 152.6,192.3" fill="#f01515"/><polygon points="127.4,186.7 152.6,192.3 130.1,221.8" fill="#dc0e0e"/><polygon points="126.5,175.1 115.6,194.6 140.2,190.6" fill="#a81111"/><polygon points="178.2,192.0 170.2,225.0 152.6,192.3" fill="#e81212"/><polygon points="178.2,192.0 152.6,192.3 182.4,174.4" fill="#fc1919"/><polygon points="178.2,192.0 182.4,174.4 197.5,211.8" fill="#e51111"/><polygon points="178.2,192.0 197.5,211.8 170.2,225.0" fill="#dc0e0e"/><polygon points="180.8,181.2 165.2,192.7 187.9,203.4" fill="#a81111"/><polygon points="216.7,225.3 202.2,248.8 197.5,211.8" fill="#e21515"/><polygon points="216.7,225.3 197.5,211.8 224.4,212.7" fill="#f01919"/><polygon points="216.7,225.3 224.4,212.7 226.0,249.6" fill="#c70f0f"/><polygon points="216.7,225.3 226.0,249.6 202.2,248.8" fill="#c70f0f"/><polygon points="221.4,217.6 205.3,217.2 222.3,240.8" fill="#8e0e0e"/><polygon points="236.7,267.7 222.1,280.1 226.0,249.6" fill="#e21818"/><polygon points="236.7,267.7 226.0,249.6 244.5,261.0" fill="#e41919"/><polygon points="236.7,267.7 244.5,261.0 238.2,290.0" fill="#ae0e0e"/><polygon points="236.7,267.7 238.2,290.0 222.1,280.1" fill="#b81010"/><polygon points="241.5,263.6 230.4,257.0 237.4,281.8" fill="#8e0e0e"/><polygon points="251.1,304.2 237.6,309.7 238.2,290.0" fill="#cb1919"/><polygon points="251.1,304.2 238.2,290.0 258.3,301.2" fill="#cb1919"/><polygon points="251.1,304.2 258.3,301.2 259.1,321.6" fill="#970e0e"/><polygon points="251.1,304.2 259.1,321.6 237.6,309.7" fill="#9c0f0f"/><polygon points="255.5,302.4 242.3,296.0 256.0,314.5" fill="#8e0e0e"/><polygon points="267.7,340.1 253.2,341.3 259.1,321.6" fill="#cb1919"/><polygon points="267.7,340.1 259.1,321.6 275.5,339.5" fill="#cb1919"/><polygon points="267.7,340.1 275.5,339.5 261.8,359.8" fill="#970e0e"/><polygon points="267.7,340.1 261.8,359.8 253.2,341.3" fill="#aa1212"/><polygon points="272.5,339.8 263.1,328.7 264.7,352.1" fill="#8e0e0e"/><polygon points="274.8,360.8 261.8,359.8 275.5,339.5" fill="#cb1919"/><polygon points="274.8,360.8 275.5,339.5 281.6,361.4" fill="#cb1919"/><polygon points="274.8,360.8 281.6,361.4 262.4,379.6" fill="#9d0f0f"/><polygon points="274.8,360.8 262.4,379.6 261.8,359.8" fill="#b01313"/><polygon points="279.0,361.1 275.8,348.1 267.0,372.4" fill="#8e0e0e"/><polygon points="250.3,395.9 238.3,390.9 262.4,379.6" fill="#911919"/><polygon points="250.3,395.9 262.4,379.6 256.6,398.5" fill="#7a1616"/><polygon points="250.3,395.9 256.6,398.5 236.3,409.2" fill="#501010"/><polygon points="250.3,395.9 236.3,409.2 238.3,390.9" fill="#761515"/><polygon points="255.4,398.0 257.8,386.4 239.3,402.8" fill="#860d0d"/><polygon points="234.3,430.8 222.1,420.3 236.3,409.2" fill="#aa1919"/><polygon points="234.3,430.8 236.3,409.2 240.7,436.3" fill="#a71818"/><polygon points="234.3,430.8 240.7,436.3 224.5,449.2" fill="#5e0f0f"/><polygon points="234.3,430.8 224.5,449.2 222.1,420.3" fill="#8d1515"/><polygon points="239.5,435.2 235.0,417.0 228.1,441.2" fill="#860d0d"/><polygon points="214.7,472.3 203.5,453.9 224.5,449.2" fill="#b61919"/><polygon points="214.7,472.3 224.5,449.2 220.6,482.0" fill="#a41616"/><polygon points="214.7,472.3 220.6,482.0 196.4,486.8" fill="#7c1010"/><polygon points="214.7,472.3 196.4,486.8 203.5,453.9" fill="#b01818"/><polygon points="219.5,480.2 220.7,457.9 203.8,480.7" fill="#860d0d"/><polygon points="177.1,505.4 171.0,480.2 196.4,486.8" fill="#c21919"/><polygon points="177.1,505.4 196.4,486.8 180.2,518.6" fill="#a11313"/><polygon points="177.1,505.4 180.2,518.6 152.3,509.6" fill="#a01313"/><polygon points="177.1,505.4 152.3,509.6 171.0,480.2" fill="#c21919"/><polygon points="179.6,516.1 188.9,493.6 162.1,507.1" fill="#860d0d"/><polygon points="126.8,514.2 128.9,488.1 152.3,509.6" fill="#b81717"/><polygon points="126.8,514.2 152.3,509.6 125.7,527.9" fill="#8e1010"/><polygon points="126.8,514.2 125.7,527.9 103.8,499.8" fill="#ba1717"/><polygon points="126.8,514.2 103.8,499.8 128.9,488.1" fill="#c21919"/><polygon points="126.0,525.2 142.3,511.0 112.7,505.0" fill="#860d0d"/><polygon points="82.4,488.6 91.2,467.3 103.8,499.8" fill="#a51414"/><polygon points="82.4,488.6 103.8,499.8 77.7,499.8" fill="#840e0e"/><polygon points="82.4,488.6 77.7,499.8 68.5,466.2" fill="#c21919"/><polygon points="82.4,488.6 68.5,466.2 91.2,467.3" fill="#c21919"/><polygon points="78.6,497.6 95.3,494.5 73.8,474.5" fill="#860d0d"/><polygon points="55.0,449.2 65.4,437.1 68.5,466.2" fill="#811010"/><polygon points="55.0,449.2 68.5,466.2 49.6,455.6" fill="#700e0e"/><polygon points="55.0,449.2 49.6,455.6 48.9,427.5" fill="#b41919"/><polygon points="55.0,449.2 48.9,427.5 65.4,437.1" fill="#b41919"/><polygon points="50.6,454.4 63.3,458.9 51.5,435.5" fill="#860d0d"/><polygon points="29.8,417.3 40.9,410.6 48.9,427.5" fill="#711111"/><polygon points="29.8,417.3 48.9,427.5 23.9,420.9" fill="#5e0e0e"/><polygon points="29.8,417.3 23.9,420.9 17.3,400.6" fill="#a81919"/><polygon points="29.8,417.3 17.3,400.6 40.9,410.6" fill="#a81919"/><polygon points="25.0,420.2 42.2,423.2 22.0,407.6" fill="#860d0d"/><polygon points="6.3,381.9 19.0,378.9 17.3,400.6" fill="#620f0f"/><polygon points="6.3,381.9 17.3,400.6 -0.3,383.5" fill="#5c0e0e"/><polygon points="6.3,381.9 -0.3,383.5 8.3,360.2" fill="#a81919"/><polygon points="6.3,381.9 8.3,360.2 19.0,378.9" fill="#a31818"/><polygon points="1.0,383.2 12.2,393.5 7.4,368.7" fill="#860d0d"/><polygon points="10.7,339.6 23.6,340.7 8.3,360.2" fill="#b30e0e"/><polygon points="10.7,339.6 8.3,360.2 3.9,339.1" fill="#bd1010"/><polygon points="10.7,339.6 3.9,339.1 21.8,321.5" fill="#e21919"/><polygon points="10.7,339.6 21.8,321.5 23.6,340.7" fill="#d41515"/><polygon points="6.5,339.3 9.1,351.9 17.7,328.5" fill="#7a0c0c"/><polygon points="24.4,301.9 38.0,307.6 21.8,321.5" fill="#b30e0e"/><polygon points="24.4,301.9 21.8,321.5 17.3,299.0" fill="#bf1111"/><polygon points="24.4,301.9 17.3,299.0 27.0,280.5" fill="#e21919"/><polygon points="24.4,301.9 27.0,280.5 38.0,307.6" fill="#d91616"/><polygon points="20.0,300.1 25.7,314.7 25.4,289.1" fill="#7a0c0c"/><polygon points="27.7,253.8 43.8,267.6 27.0,280.5" fill="#b30e0e"/><polygon points="27.7,253.8 27.0,280.5 19.3,246.6" fill="#bd1010"/><polygon points="27.7,253.8 19.3,246.6 39.7,232.2" fill="#e21919"/><polygon points="27.7,253.8 39.7,232.2 43.8,267.6" fill="#cb1313"/><polygon points="22.5,249.3 27.3,270.6 34.9,241.3" fill="#7a0c0c"/><polygon points="51.3,204.9 65.3,227.7 39.7,232.2" fill="#ca0e0e"/><polygon points="51.3,204.9 39.7,232.2 44.0,192.9" fill="#d91313"/><polygon points="51.3,204.9 44.0,192.9 73.8,189.5" fill="#ec1818"/><polygon points="51.3,204.9 73.8,189.5 65.3,227.7" fill="#d11010"/><polygon points="46.8,197.4 44.1,221.8 64.5,195.4" fill="#7a0c0c"/><polygon points="96.7,168.5 104.0,199.0 73.8,189.5" fill="#e00f0f"/><polygon points="96.7,168.5 73.8,189.5 92.9,152.5" fill="#f41616"/><polygon points="96.7,168.5 92.9,152.5 125.9,168.0" fill="#f21515"/><polygon points="96.7,168.5 125.9,168.0 104.0,199.0" fill="#dd0e0e"/><polygon points="94.3,158.6 85.0,179.8 111.7,169.5" fill="#a81111"/><polygon points="155.2,160.9 152.6,192.3 125.9,168.0" fill="#e71212"/><polygon points="155.2,160.9 125.9,168.0 156.5,144.5" fill="#fc1919"/><polygon points="155.2,160.9 156.5,144.5 182.4,174.4" fill="#e91212"/><polygon points="155.2,160.9 182.4,174.4 152.6,192.3" fill="#dc0e0e"/><polygon points="156.0,150.8 140.3,165.2 169.1,167.8" fill="#a81111"/><polygon points="208.2,186.1 197.5,211.8 182.4,174.4" fill="#f01515"/><polygon points="208.2,186.1 182.4,174.4 213.8,172.6" fill="#fc1919"/><polygon points="208.2,186.1 213.8,172.6 224.4,212.7" fill="#df0f0f"/><polygon points="208.2,186.1 224.4,212.7 197.5,211.8" fill="#dd0e0e"/><polygon points="211.6,177.8 195.2,181.0 216.7,200.0" fill="#a81111"/><polygon points="239.7,233.6 226.0,249.6 224.4,212.7" fill="#ed1818"/><polygon points="239.7,233.6 224.4,212.7 246.9,225.2" fill="#f01919"/><polygon points="239.7,233.6 246.9,225.2 244.5,261.0" fill="#c30e0e"/><polygon points="239.7,233.6 244.5,261.0 226.0,249.6" fill="#c80f0f"/><polygon points="244.2,228.4 230.7,221.4 242.7,250.7" fill="#8e0e0e"/><polygon points="249.6,283.1 238.2,290.0 244.5,261.0" fill="#cb1919"/><polygon points="249.6,283.1 244.5,261.0 255.5,279.4" fill="#cb1919"/><polygon points="249.6,283.1 255.5,279.4 258.3,301.2" fill="#970e0e"/><polygon points="249.6,283.1 258.3,301.2 238.2,290.0" fill="#9a0f0f"/><polygon points="253.2,280.8 246.6,270.2 253.9,294.4" fill="#8e0e0e"/><polygon points="271.8,318.6 259.1,321.6 258.3,301.2" fill="#cb1919"/><polygon points="271.8,318.6 258.3,301.2 278.4,317.0" fill="#cb1919"/><polygon points="271.8,318.6 278.4,317.0 275.5,339.5" fill="#950e0e"/><polygon points="271.8,318.6 275.5,339.5 259.1,321.6" fill="#9f1010"/><polygon points="275.9,317.6 263.7,307.8 274.6,331.0" fill="#8e0e0e"/><polygon points="273.6,382.3 262.4,379.6 281.6,361.4" fill="#891919"/><polygon points="273.6,382.3 281.6,361.4 279.6,383.7" fill="#801717"/><polygon points="273.6,382.3 279.6,383.7 256.6,398.5" fill="#4b1111"/><polygon points="273.6,382.3 256.6,398.5 262.4,379.6" fill="#671414"/><polygon points="278.4,383.4 278.2,369.9 263.5,392.5" fill="#860d0d"/><polygon points="246.8,415.6 236.3,409.2 256.6,398.5" fill="#891919"/><polygon points="246.8,415.6 256.6,398.5 252.4,419.1" fill="#761616"/><polygon points="246.8,415.6 252.4,419.1 240.7,436.3" fill="#390e0e"/><polygon points="246.8,415.6 240.7,436.3 236.3,409.2" fill="#591313"/><polygon points="251.3,418.4 250.6,404.4 242.8,427.4" fill="#860d0d"/><polygon points="235.1,461.6 224.5,449.2 240.7,436.3" fill="#ae1919"/><polygon points="235.1,461.6 240.7,436.3 240.8,468.3" fill="#a91818"/><polygon points="235.1,461.6 240.8,468.3 220.6,482.0" fill="#6e1010"/><polygon points="235.1,461.6 220.6,482.0 224.5,449.2" fill="#961515"/><polygon points="239.7,467.0 238.5,445.7 226.5,473.5" fill="#860d0d"/><polygon points="204.6,506.7 196.4,486.8 220.6,482.0" fill="#ba1919"/><polygon points="204.6,506.7 220.6,482.0 209.0,517.4" fill="#a71515"/><polygon points="204.6,506.7 209.0,517.4 180.2,518.6" fill="#911212"/><polygon points="204.6,506.7 180.2,518.6 196.4,486.8" fill="#b91818"/><polygon points="208.2,515.3 214.6,491.5 190.1,513.5" fill="#860d0d"/><polygon points="154.1,532.8 152.3,509.6 180.2,518.6" fill="#b51818"/><polygon points="154.1,532.8 180.2,518.6 155.1,545.4" fill="#931212"/><polygon points="154.1,532.8 155.1,545.4 125.7,527.9" fill="#a71515"/><polygon points="154.1,532.8 125.7,527.9 152.3,509.6" fill="#ba1919"/><polygon points="154.9,543.0 170.1,524.2 136.9,529.5" fill="#860d0d"/><polygon points="98.6,521.5 103.8,499.8 125.7,527.9" fill="#a11414"/><polygon points="98.6,521.5 125.7,527.9 95.7,533.3" fill="#7f0f0f"/><polygon points="98.6,521.5 95.7,533.3 77.7,499.8" fill="#ba1919"/><polygon points="98.6,521.5 77.7,499.8 103.8,499.8" fill="#ba1919"/><polygon points="96.3,531.0 114.8,525.3 85.7,507.9" fill="#860d0d"/><polygon points="59.6,480.8 68.5,466.2 77.7,499.8" fill="#791111"/><polygon points="59.6,480.8 77.7,499.8 54.8,488.6" fill="#670e0e"/><polygon points="59.6,480.8 54.8,488.6 49.6,455.6" fill="#ac1919"/><polygon points="59.6,480.8 49.6,455.6 68.5,466.2" fill="#ac1919"/><polygon points="55.7,487.1 70.2,491.9 53.7,464.7" fill="#860d0d"/><polygon points="40.1,435.1 48.9,427.5 49.6,455.6" fill="#580f0f"/><polygon points="40.1,435.1 49.6,455.6 35.3,439.2" fill="#540e0e"/><polygon points="40.1,435.1 35.3,439.2 23.9,420.9" fill="#a01919"/><polygon points="40.1,435.1 23.9,420.9 48.9,427.5" fill="#a01919"/><polygon points="36.2,438.4 45.7,447.0 31.0,426.4" fill="#860d0d"/><polygon points="6.7,405.0 17.3,400.6 23.9,420.9" fill="#5f1010"/><polygon points="6.7,405.0 23.9,420.9 0.9,407.4" fill="#530e0e"/><polygon points="6.7,405.0 0.9,407.4 -0.3,383.5" fill="#a01919"/><polygon points="6.7,405.0 -0.3,383.5 17.3,400.6" fill="#a01919"/><polygon points="2.0,406.9 16.8,415.0 1.7,392.3" fill="#860d0d"/><polygon points="-3.1,361.1 8.3,360.2 -0.3,383.5" fill="#b40e0e"/><polygon points="-3.1,361.1 -0.3,383.5 -9.3,361.5" fill="#b80f0f"/><polygon points="-3.1,361.1 -9.3,361.5 3.9,339.1" fill="#e21919"/><polygon points="-3.1,361.1 3.9,339.1 8.3,360.2" fill="#dc1717"/><polygon points="-6.9,361.3 -1.8,374.5 0.9,347.6" fill="#7a0c0c"/><polygon points="10.7,318.8 21.8,321.5 3.9,339.1" fill="#b40e0e"/><polygon points="10.7,318.8 3.9,339.1 4.7,317.3" fill="#c11111"/><polygon points="10.7,318.8 4.7,317.3 17.3,299.0" fill="#e21919"/><polygon points="10.7,318.8 17.3,299.0 21.8,321.5" fill="#d81616"/><polygon points="7.0,317.9 6.9,330.9 17.6,307.9" fill="#7a0c0c"/><polygon points="13.5,272.2 27.0,280.5 17.3,299.0" fill="#b30e0e"/><polygon points="13.5,272.2 17.3,299.0 6.2,267.7" fill="#b80f0f"/><polygon points="13.5,272.2 6.2,267.7 19.3,246.6" fill="#e21919"/><polygon points="13.5,272.2 19.3,246.6 27.0,280.5" fill="#d71616"/><polygon points="9.0,269.5 15.0,288.6 16.8,257.2" fill="#7a0c0c"/><polygon points="25.9,216.1 39.7,232.2 19.3,246.6" fill="#c90e0e"/><polygon points="25.9,216.1 19.3,246.6 18.5,207.3" fill="#d31111"/><polygon points="25.9,216.1 18.5,207.3 44.0,192.9" fill="#ee1919"/><polygon points="25.9,216.1 44.0,192.9 39.7,232.2" fill="#da1313"/><polygon points="21.4,210.7 21.8,235.1 36.4,202.2" fill="#7a0c0c"/><polygon points="64.0,165.7 73.8,189.5 44.0,192.9" fill="#df0f0f"/><polygon points="64.0,165.7 44.0,192.9 58.6,152.8" fill="#ed1414"/><polygon points="64.0,165.7 58.6,152.8 92.9,152.5" fill="#f61717"/><polygon points="64.0,165.7 92.9,152.5 73.8,189.5" fill="#e21010"/><polygon points="60.7,157.8 53.5,179.5 78.3,159.2" fill="#a81111"/><polygon points="123.8,140.3 125.9,168.0 92.9,152.5" fill="#e51111"/><polygon points="123.8,140.3 92.9,152.5 122.6,125.3" fill="#f91818"/><polygon points="123.8,140.3 122.6,125.3 156.5,144.5" fill="#ed1414"/><polygon points="123.8,140.3 156.5,144.5 125.9,168.0" fill="#dd0e0e"/><polygon points="123.1,131.2 108.2,147.5 140.3,142.9" fill="#a81111"/><polygon points="188.7,148.4 182.4,174.4 156.5,144.5" fill="#ed1414"/><polygon points="188.7,148.4 156.5,144.5 192.1,134.3" fill="#fc1919"/><polygon points="188.7,148.4 192.1,134.3 213.8,172.6" fill="#e11010"/><polygon points="188.7,148.4 213.8,172.6 182.4,174.4" fill="#dc0e0e"/><polygon points="190.8,139.8 172.6,145.9 201.6,161.3" fill="#a81111"/><polygon points="235.8,194.2 224.4,212.7 213.8,172.6" fill="#ec1818"/><polygon points="235.8,194.2 213.8,172.6 241.9,184.2" fill="#f01919"/><polygon points="235.8,194.2 241.9,184.2 246.9,225.2" fill="#c40e0e"/><polygon points="235.8,194.2 246.9,225.2 224.4,212.7" fill="#c60e0e"/><polygon points="239.5,188.1 223.1,181.1 243.0,213.3" fill="#8e0e0e"/><polygon points="256.0,251.2 244.5,261.0 246.9,225.2" fill="#e41919"/><polygon points="256.0,251.2 246.9,225.2 262.2,245.9" fill="#e41919"/><polygon points="256.0,251.2 262.2,245.9 255.5,279.4" fill="#af0e0e"/><polygon points="256.0,251.2 255.5,279.4 244.5,261.0" fill="#b71010"/><polygon points="259.8,248.0 251.1,235.7 255.8,268.9" fill="#8e0e0e"/><polygon points="268.9,296.8 258.3,301.2 255.5,279.4" fill="#cb1919"/><polygon points="268.9,296.8 255.5,279.4 274.6,294.5" fill="#cb1919"/><polygon points="268.9,296.8 274.6,294.5 278.4,317.0" fill="#960e0e"/><polygon points="268.9,296.8 278.4,317.0 258.3,301.2" fill="#990f0f"/><polygon points="272.4,295.4 259.7,286.8 274.8,308.7" fill="#8e0e0e"/><polygon points="286.9,338.7 275.5,339.5 278.4,317.0" fill="#cb1919"/><polygon points="286.9,338.7 278.4,317.0 293.1,338.2" fill="#cb1919"/><polygon points="286.9,338.7 293.1,338.2 281.6,361.4" fill="#980e0e"/><polygon points="286.9,338.7 281.6,361.4 275.5,339.5" fill="#a61111"/><polygon points="290.7,338.4 282.5,325.3 284.4,352.5" fill="#8e0e0e"/><polygon points="291.9,362.2 281.6,361.4 293.1,338.2" fill="#cb1919"/><polygon points="291.9,362.2 293.1,338.2 297.7,362.6" fill="#cb1919"/><polygon points="291.9,362.2 297.7,362.6 279.6,383.7" fill="#9d0f0f"/><polygon points="291.9,362.2 279.6,383.7 281.6,361.4" fill="#ac1212"/><polygon points="295.4,362.5 293.4,347.8 284.3,375.4" fill="#8e0e0e"/><polygon points="266.2,402.5 256.6,398.5 279.6,383.7" fill="#891919"/><polygon points="266.2,402.5 279.6,383.7 271.5,404.7" fill="#761616"/><polygon points="266.2,402.5 271.5,404.7 252.4,419.1" fill="#451010"/><polygon points="266.2,402.5 252.4,419.1 256.6,398.5" fill="#641414"/><polygon points="270.4,404.3 274.6,391.6 254.9,411.0" fill="#860d0d"/><polygon points="250.5,444.6 240.7,436.3 252.4,419.1" fill="#a21919"/><polygon points="250.5,444.6 252.4,419.1 255.8,449.2" fill="#a21919"/><polygon points="250.5,444.6 255.8,449.2 240.8,468.3" fill="#550f0f"/><polygon points="250.5,444.6 240.8,468.3 240.7,436.3" fill="#741313"/><polygon points="254.8,448.3 251.5,428.6 244.4,458.0" fill="#860d0d"/><polygon points="229.6,496.7 220.6,482.0 240.8,468.3" fill="#ae1919"/><polygon points="229.6,496.7 240.8,468.3 234.6,504.8" fill="#a41717"/><polygon points="229.6,496.7 234.6,504.8 209.0,517.4" fill="#741010"/><polygon points="229.6,496.7 209.0,517.4 220.6,482.0" fill="#9a1616"/><polygon points="233.6,503.3 236.7,479.2 217.6,509.0" fill="#860d0d"/><polygon points="185.0,538.7 180.2,518.6 209.0,517.4" fill="#b91818"/><polygon points="185.0,538.7 209.0,517.4 187.7,549.8" fill="#9e1414"/><polygon points="185.0,538.7 187.7,549.8 155.1,545.4" fill="#9b1313"/><polygon points="185.0,538.7 155.1,545.4 180.2,518.6" fill="#ba1919"/><polygon points="187.1,547.6 199.9,525.7 167.1,542.2" fill="#860d0d"/><polygon points="124.1,548.7 125.7,527.9 155.1,545.4" fill="#a81616"/><polygon points="124.1,548.7 155.1,545.4 123.2,560.2" fill="#871010"/><polygon points="124.1,548.7 123.2,560.2 95.7,533.3" fill="#b51818"/><polygon points="124.1,548.7 95.7,533.3 125.7,527.9" fill="#ba1919"/><polygon points="123.3,557.9 142.8,546.5 106.7,539.0" fill="#860d0d"/><polygon points="70.6,516.8 77.7,499.8 95.7,533.3" fill="#901212"/><polygon points="70.6,516.8 95.7,533.3 66.7,526.2" fill="#7b0e0e"/><polygon points="70.6,516.8 66.7,526.2 54.8,488.6" fill="#ba1919"/><polygon points="70.6,516.8 54.8,488.6 77.7,499.8" fill="#ba1919"/><polygon points="67.5,524.3 85.4,526.4 60.6,499.5" fill="#860d0d"/><polygon points="41.3,465.3 49.6,455.6 54.8,488.6" fill="#6d0f0f"/><polygon points="41.3,465.3 54.8,488.6 36.7,470.6" fill="#670e0e"/><polygon points="41.3,465.3 36.7,470.6 35.3,439.2" fill="#ac1919"/><polygon points="41.3,465.3 35.3,439.2 49.6,455.6" fill="#ac1919"/><polygon points="37.6,469.6 49.5,478.4 37.6,449.0" fill="#860d0d"/><polygon points="15.1,426.3 23.9,420.9 35.3,439.2" fill="#631010"/><polygon points="15.1,426.3 35.3,439.2 10.2,429.3" fill="#540e0e"/><polygon points="15.1,426.3 10.2,429.3 0.9,407.4" fill="#a01919"/><polygon points="15.1,426.3 0.9,407.4 23.9,420.9" fill="#a01919"/><polygon points="11.1,428.7 28.1,433.7 6.2,415.3" fill="#860d0d"/><polygon points="-10.4,385.9 -0.3,383.5 0.9,407.4" fill="#550e0e"/><polygon points="-10.4,385.9 0.9,407.4 -16.0,387.2" fill="#520e0e"/><polygon points="-10.4,385.9 -16.0,387.2 -9.3,361.5" fill="#a01919"/><polygon points="-10.4,385.9 -9.3,361.5 -0.3,383.5" fill="#a01919"/><polygon points="-14.9,386.9 -4.4,399.2 -10.0,371.1" fill="#860d0d"/><polygon points="-6.5,338.3 3.9,339.1 -9.3,361.5" fill="#b40e0e"/><polygon points="-6.5,338.3 -9.3,361.5 -12.2,337.8" fill="#bc1010"/><polygon points="-6.5,338.3 -12.2,337.8 4.7,317.3" fill="#e21919"/><polygon points="-6.5,338.3 4.7,317.3 3.9,339.1" fill="#d81616"/><polygon points="-10.0,338.0 -8.4,352.1 0.4,325.4" fill="#7a0c0c"/><polygon points="6.5,294.5 17.3,299.0 4.7,317.3" fill="#b40e0e"/><polygon points="6.5,294.5 4.7,317.3 0.5,292.0" fill="#bc1010"/><polygon points="6.5,294.5 0.5,292.0 6.2,267.7" fill="#e21919"/><polygon points="6.5,294.5 6.2,267.7 17.3,299.0" fill="#e11818"/><polygon points="2.8,292.9 8.9,309.5 5.2,278.4" fill="#7a0c0c"/><polygon points="6.5,235.6 19.3,246.6 6.2,267.7" fill="#b40e0e"/><polygon points="6.5,235.6 6.2,267.7 -0.6,229.5" fill="#ba0f0f"/><polygon points="6.5,235.6 -0.6,229.5 18.5,207.3" fill="#e21919"/><polygon points="6.5,235.6 18.5,207.3 19.3,246.6" fill="#d41515"/><polygon points="2.1,231.9 6.1,255.6 13.4,219.0" fill="#7a0c0c"/><polygon points="32.9,174.6 44.0,192.9 18.5,207.3" fill="#cb0f0f"/><polygon points="32.9,174.6 18.5,207.3 26.7,164.6" fill="#d61212"/><polygon points="32.9,174.6 26.7,164.6 58.6,152.8" fill="#eb1818"/><polygon points="32.9,174.6 58.6,152.8 44.0,192.9" fill="#d71212"/><polygon points="29.1,168.5 23.6,194.4 47.7,160.9" fill="#7a0c0c"/><polygon points="87.1,128.1 92.9,152.5 58.6,152.8" fill="#e21010"/><polygon points="87.1,128.1 58.6,152.8 83.9,114.7" fill="#f11515"/><polygon points="87.1,128.1 83.9,114.7 122.6,125.3" fill="#ef1414"/><polygon points="87.1,128.1 122.6,125.3 92.9,152.5" fill="#e00f0f"/><polygon points="85.1,119.9 72.3,140.6 105.1,127.5" fill="#a81111"/><polygon points="158.5,119.4 156.5,144.5 122.6,125.3" fill="#ea1313"/><polygon points="158.5,119.4 122.6,125.3 159.6,105.6" fill="#fb1818"/><polygon points="158.5,119.4 159.6,105.6 192.1,134.3" fill="#e61111"/><polygon points="158.5,119.4 192.1,134.3 156.5,144.5" fill="#dc0e0e"/><polygon points="159.2,111.0 140.3,122.7 175.8,126.1" fill="#a81111"/><polygon points="222.3,152.1 213.8,172.6 192.1,134.3" fill="#f61717"/><polygon points="222.3,152.1 192.1,134.3 227.0,140.8" fill="#fc1919"/><polygon points="222.3,152.1 227.0,140.8 241.9,184.2" fill="#dd0e0e"/><polygon points="222.3,152.1 241.9,184.2 213.8,172.6" fill="#dc0e0e"/><polygon points="225.2,145.2 207.4,143.5 232.9,168.4" fill="#a81111"/><polygon points="257.9,212.4 246.9,225.2 241.9,184.2" fill="#f01919"/><polygon points="257.9,212.4 241.9,184.2 264.0,205.3" fill="#f01919"/><polygon points="257.9,212.4 264.0,205.3 262.2,245.9" fill="#c30e0e"/><polygon points="257.9,212.4 262.2,245.9 246.9,225.2" fill="#c70f0f"/><polygon points="261.6,208.0 248.9,195.5 260.9,233.2" fill="#8e0e0e"/><polygon points="264.6,273.9 255.5,279.4 262.2,245.9" fill="#cb1919"/><polygon points="264.6,273.9 262.2,245.9 269.6,270.8" fill="#cb1919"/><polygon points="264.6,273.9 269.6,270.8 274.6,294.5" fill="#960e0e"/><polygon points="264.6,273.9 274.6,294.5 255.5,279.4" fill="#980e0e"/><polygon points="267.7,272.0 263.5,257.5 269.7,286.7" fill="#8e0e0e"/><polygon points="288.5,314.6 278.4,317.0 274.6,294.5" fill="#cb1919"/><polygon points="288.5,314.6 274.6,294.5 294.1,313.2" fill="#cb1919"/><polygon points="288.5,314.6 294.1,313.2 293.1,338.2" fill="#950e0e"/><polygon points="288.5,314.6 293.1,338.2 278.4,317.0" fill="#9c0f0f"/><polygon points="291.9,313.8 280.4,302.2 292.0,328.6" fill="#8e0e0e"/><polygon points="289.0,386.0 279.6,383.7 297.7,362.6" fill="#891919"/><polygon points="289.0,386.0 297.7,362.6 294.1,387.2" fill="#831818"/><polygon points="289.0,386.0 294.1,387.2 271.5,404.7" fill="#4b1111"/><polygon points="289.0,386.0 271.5,404.7 279.6,383.7" fill="#611414"/><polygon points="293.1,387.0 294.1,372.2 278.6,397.7" fill="#860d0d"/><polygon points="261.1,424.5 252.4,419.1 271.5,404.7" fill="#891919"/><polygon points="261.1,424.5 271.5,404.7 265.9,427.4" fill="#7b1717"/><polygon points="261.1,424.5 265.9,427.4 255.8,449.2" fill="#380e0e"/><polygon points="261.1,424.5 255.8,449.2 252.4,419.1" fill="#4e1111"/><polygon points="265.0,426.8 265.0,411.5 257.8,438.8" fill="#860d0d"/><polygon points="249.6,478.7 240.8,468.3 255.8,449.2" fill="#ae1919"/><polygon points="249.6,478.7 255.8,449.2 254.5,484.4" fill="#ad1818"/><polygon points="249.6,478.7 254.5,484.4 234.6,504.8" fill="#6d1010"/><polygon points="249.6,478.7 234.6,504.8 240.8,468.3" fill="#891313"/><polygon points="253.5,483.3 253.4,460.2 240.9,494.0" fill="#860d0d"/><polygon points="215.9,534.0 209.0,517.4 234.6,504.8" fill="#ba1919"/><polygon points="215.9,534.0 234.6,504.8 219.7,543.1" fill="#ab1616"/><polygon points="215.9,534.0 219.7,543.1 187.7,549.8" fill="#931212"/><polygon points="215.9,534.0 187.7,549.8 209.0,517.4" fill="#b21717"/><polygon points="218.9,541.3 227.8,516.4 199.2,543.5" fill="#860d0d"/><polygon points="156.6,564.9 155.1,545.4 187.7,549.8" fill="#b01717"/><polygon points="156.6,564.9 187.7,549.8 157.4,575.6" fill="#951212"/><polygon points="156.6,564.9 157.4,575.6 123.2,560.2" fill="#aa1616"/><polygon points="156.6,564.9 123.2,560.2 155.1,545.4" fill="#ba1919"/><polygon points="157.3,573.5 175.7,556.1 136.4,561.8" fill="#860d0d"/><polygon points="91.3,551.5 95.7,533.3 123.2,560.2" fill="#991313"/><polygon points="91.3,551.5 123.2,560.2 88.9,561.5" fill="#800f0f"/><polygon points="91.3,551.5 88.9,561.5 66.7,526.2" fill="#ba1919"/><polygon points="91.3,551.5 66.7,526.2 95.7,533.3" fill="#ba1919"/><polygon points="89.4,559.6 110.2,556.9 76.0,536.2" fill="#860d0d"/><polygon points="47.3,500.8 54.8,488.6 66.7,526.2" fill="#700f0f"/><polygon points="47.3,500.8 66.7,526.2 43.2,507.5" fill="#660e0e"/><polygon points="47.3,500.8 43.2,507.5 36.7,470.6" fill="#ac1919"/><polygon points="47.3,500.8 36.7,470.6 54.8,488.6" fill="#ac1919"/><polygon points="44.0,506.2 58.4,515.9 41.0,481.4" fill="#860d0d"/><polygon points="27.9,445.5 35.3,439.2 36.7,470.6" fill="#530e0e"/><polygon points="27.9,445.5 36.7,470.6 23.8,448.9" fill="#530e0e"/><polygon points="27.9,445.5 23.8,448.9 10.2,429.3" fill="#a01919"/><polygon points="27.9,445.5 10.2,429.3 35.3,439.2" fill="#a01919"/><polygon points="24.6,448.3 32.8,460.3 17.8,435.6" fill="#860d0d"/><polygon points="-8.0,411.0 0.9,407.4 10.2,429.3" fill="#5b0f0f"/><polygon points="-8.0,411.0 10.2,429.3 -12.8,413.0" fill="#520e0e"/><polygon points="-8.0,411.0 -12.8,413.0 -16.0,387.2" fill="#a01919"/><polygon points="-8.0,411.0 -16.0,387.2 0.9,407.4" fill="#a01919"/><polygon points="-11.9,412.7 2.6,422.5 -13.7,397.0" fill="#860d0d"/><polygon points="-18.9,362.3 -9.3,361.5 -16.0,387.2" fill="#b30e0e"/><polygon points="-18.9,362.3 -16.0,387.2 -24.1,362.7" fill="#b70f0f"/><polygon points="-18.9,362.3 -24.1,362.7 -12.2,337.8" fill="#e21919"/><polygon points="-18.9,362.3 -12.2,337.8 -9.3,361.5" fill="#de1818"/><polygon points="-22.1,362.5 -17.6,377.3 -15.1,347.3" fill="#7a0c0c"/><polygon points="-4.7,315.0 4.7,317.3 -12.2,337.8" fill="#b50e0e"/><polygon points="-4.7,315.0 -12.2,337.8 -9.8,313.8" fill="#bf1111"/><polygon points="-4.7,315.0 -9.8,313.8 0.5,292.0" fill="#e21919"/><polygon points="-4.7,315.0 0.5,292.0 4.7,317.3" fill="#dd1818"/><polygon points="-7.8,314.3 -9.0,328.6 2.0,302.5" fill="#7a0c0c"/><polygon points="-5.1,260.8 6.2,267.7 0.5,292.0" fill="#b30e0e"/><polygon points="-5.1,260.8 0.5,292.0 -11.3,257.0" fill="#b60f0f"/><polygon points="-5.1,260.8 -11.3,257.0 -0.6,229.5" fill="#e21919"/><polygon points="-5.1,260.8 -0.6,229.5 6.2,267.7" fill="#de1818"/><polygon points="-8.9,258.4 -3.0,279.7 -2.8,242.5" fill="#7a0c0c"/><polygon points="6.9,193.7 18.5,207.3 -0.6,229.5" fill="#ca0e0e"/><polygon points="6.9,193.7 -0.6,229.5 0.6,186.3" fill="#d11010"/><polygon points="6.9,193.7 0.6,186.3 26.7,164.6" fill="#ee1919"/><polygon points="6.9,193.7 26.7,164.6 18.5,207.3" fill="#df1414"/><polygon points="3.1,189.2 2.1,215.9 18.1,176.1" fill="#7a0c0c"/><polygon points="50.4,132.8 58.6,152.8 26.7,164.6" fill="#e00f0f"/><polygon points="50.4,132.8 26.7,164.6 45.9,121.8" fill="#eb1313"/><polygon points="50.4,132.8 45.9,121.8 83.9,114.7" fill="#f61717"/><polygon points="50.4,132.8 83.9,114.7 58.6,152.8" fill="#e61111"/><polygon points="47.6,126.1 37.7,148.6 66.7,123.4" fill="#a81111"/><polygon points="120.9,102.2 122.6,125.3 83.9,114.7" fill="#e81212"/><polygon points="120.9,102.2 83.9,114.7 119.9,89.5" fill="#f71717"/><polygon points="120.9,102.2 119.9,89.5 159.6,105.6" fill="#eb1313"/><polygon points="120.9,102.2 159.6,105.6 122.6,125.3" fill="#de0f0f"/><polygon points="120.3,94.4 102.2,109.1 140.4,104.0" fill="#a81111"/><polygon points="197.4,112.5 192.1,134.3 159.6,105.6" fill="#f11515"/><polygon points="197.4,112.5 159.6,105.6 200.3,100.6" fill="#fc1919"/><polygon points="197.4,112.5 200.3,100.6 227.0,140.8" fill="#e00f0f"/><polygon points="197.4,112.5 227.0,140.8 192.1,134.3" fill="#dc0e0e"/><polygon points="199.1,105.2 178.7,107.8 212.8,127.0" fill="#a81111"/><polygon points="251.5,168.6 241.9,184.2 227.0,140.8" fill="#f01919"/><polygon points="251.5,168.6 227.0,140.8 256.7,160.1" fill="#f01919"/><polygon points="251.5,168.6 256.7,160.1 264.0,205.3" fill="#c30e0e"/><polygon points="251.5,168.6 264.0,205.3 241.9,184.2" fill="#c50e0e"/><polygon points="254.7,163.4 237.5,151.6 259.8,190.9" fill="#8e0e0e"/><polygon points="271.9,237.7 262.2,245.9 264.0,205.3" fill="#e41919"/><polygon points="271.9,237.7 264.0,205.3 277.1,233.2" fill="#e41919"/><polygon points="271.9,237.7 277.1,233.2 269.6,270.8" fill="#b00e0e"/><polygon points="271.9,237.7 269.6,270.8 262.2,245.9" fill="#b60f0f"/><polygon points="275.1,235.0 267.9,218.4 270.8,258.3" fill="#8e0e0e"/><polygon points="283.5,290.8 274.6,294.5 269.6,270.8" fill="#cb1919"/><polygon points="283.5,290.8 269.6,270.8 288.3,288.8" fill="#cb1919"/><polygon points="283.5,290.8 288.3,288.8 294.1,313.2" fill="#960e0e"/><polygon points="283.5,290.8 294.1,313.2 274.6,294.5" fill="#970e0e"/><polygon points="286.4,289.6 273.9,279.3 290.2,304.0" fill="#8e0e0e"/><polygon points="302.6,337.4 293.1,338.2 294.1,313.2" fill="#cb1919"/><polygon points="302.6,337.4 294.1,313.2 307.9,337.0" fill="#cb1919"/><polygon points="302.6,337.4 307.9,337.0 297.7,362.6" fill="#980e0e"/><polygon points="302.6,337.4 297.7,362.6 293.1,338.2" fill="#a31111"/><polygon points="305.9,337.2 298.3,322.6 300.5,352.8" fill="#8e0e0e"/><polygon points="306.5,363.3 297.7,362.6 307.9,337.0" fill="#cb1919"/><polygon points="306.5,363.3 307.9,337.0 311.3,363.7" fill="#cb1919"/><polygon points="306.5,363.3 311.3,363.7 294.1,387.2" fill="#9e1010"/><polygon points="306.5,363.3 294.1,387.2 297.7,362.6" fill="#a91212"/><polygon points="309.4,363.6 308.2,347.6 298.9,378.0" fill="#8e0e0e"/><polygon points="279.6,408.1 271.5,404.7 294.1,387.2" fill="#891919"/><polygon points="279.6,408.1 294.1,387.2 284.1,409.9" fill="#791717"/><polygon points="279.6,408.1 284.1,409.9 265.9,427.4" fill="#451010"/><polygon points="279.6,408.1 265.9,427.4 271.5,404.7" fill="#5d1313"/><polygon points="283.2,409.6 288.8,396.0 268.0,418.0" fill="#860d0d"/><polygon points="264.1,456.3 255.8,449.2 265.9,427.4" fill="#a21919"/><polygon points="264.1,456.3 265.9,427.4 268.6,460.2" fill="#a21919"/><polygon points="264.1,456.3 268.6,460.2 254.5,484.4" fill="#550f0f"/><polygon points="264.1,456.3 254.5,484.4 255.8,449.2" fill="#6b1212"/><polygon points="267.8,459.4 265.4,438.4 258.0,472.2" fill="#860d0d"/><polygon points="242.2,517.4 234.6,504.8 254.5,484.4" fill="#ae1919"/><polygon points="242.2,517.4 254.5,484.4 246.4,524.2" fill="#a91818"/><polygon points="242.2,517.4 246.4,524.2 219.7,543.1" fill="#751111"/><polygon points="242.2,517.4 219.7,543.1 234.6,504.8" fill="#911414"/><polygon points="245.6,522.9 250.1,497.1 229.3,532.9" fill="#860d0d"/><polygon points="191.7,566.9 187.7,549.8 219.7,543.1" fill="#b61818"/><polygon points="191.7,566.9 219.7,543.1 194.0,576.2" fill="#a11414"/><polygon points="191.7,566.9 194.0,576.2 157.4,575.6" fill="#9d1414"/><polygon points="191.7,566.9 157.4,575.6 187.7,549.8" fill="#b81818"/><polygon points="193.5,574.4 209.1,552.7 171.2,571.8" fill="#860d0d"/><polygon points="121.7,577.9 123.2,560.2 157.4,575.6" fill="#a21515"/><polygon points="121.7,577.9 157.4,575.6 121.0,587.5" fill="#891010"/><polygon points="121.7,577.9 121.0,587.5 88.9,561.5" fill="#b71818"/><polygon points="121.7,577.9 88.9,561.5 123.2,560.2" fill="#ba1919"/><polygon points="121.1,585.6 143.2,576.4 101.7,567.7" fill="#860d0d"/><polygon points="60.7,540.6 66.7,526.2 88.9,561.5" fill="#8a1111"/><polygon points="60.7,540.6 88.9,561.5 57.4,548.5" fill="#7b0e0e"/><polygon points="60.7,540.6 57.4,548.5 43.2,507.5" fill="#ba1919"/><polygon points="60.7,540.6 43.2,507.5 66.7,526.2" fill="#ba1919"/><polygon points="58.1,547.0 77.1,553.3 49.4,520.5" fill="#860d0d"/><polygon points="29.6,478.9 36.7,470.6 43.2,507.5" fill="#690e0e"/><polygon points="29.6,478.9 43.2,507.5 25.8,483.3" fill="#670e0e"/><polygon points="29.6,478.9 25.8,483.3 23.8,448.9" fill="#ac1919"/><polygon points="29.6,478.9 23.8,448.9 36.7,470.6" fill="#ac1919"/><polygon points="26.5,482.5 37.9,494.9 25.8,460.3" fill="#860d0d"/><polygon points="2.6,433.9 10.2,429.3 23.8,448.9" fill="#5f1010"/><polygon points="2.6,433.9 23.8,448.9 -1.5,436.4" fill="#540e0e"/><polygon points="2.6,433.9 -1.5,436.4 -12.8,413.0" fill="#a01919"/><polygon points="2.6,433.9 -12.8,413.0 10.2,429.3" fill="#a01919"/><polygon points="-0.7,435.9 16.3,442.6 -7.1,421.8" fill="#860d0d"/><polygon points="-24.6,389.3 -16.0,387.2 -12.8,413.0" fill="#540e0e"/><polygon points="-24.6,389.3 -12.8,413.0 -29.2,390.4" fill="#520e0e"/><polygon points="-24.6,389.3 -29.2,390.4 -24.1,362.7" fill="#a01919"/><polygon points="-24.6,389.3 -24.1,362.7 -16.0,387.2" fill="#a01919"/><polygon points="-28.3,390.2 -18.4,404.0 -24.7,373.2" fill="#860d0d"/><polygon points="-21.0,337.1 -12.2,337.8 -24.1,362.7" fill="#b40e0e"/><polygon points="-21.0,337.1 -24.1,362.7 -25.8,336.7" fill="#bb1010"/><polygon points="-21.0,337.1 -25.8,336.7 -9.8,313.8" fill="#e21919"/><polygon points="-21.0,337.1 -9.8,313.8 -12.2,337.8" fill="#da1717"/><polygon points="-23.9,336.9 -23.2,352.3 -14.2,322.9" fill="#7a0c0c"/><polygon points="-8.7,288.1 0.5,292.0 -9.8,313.8" fill="#b40e0e"/><polygon points="-8.7,288.1 -9.8,313.8 -13.8,286.0" fill="#ba0f0f"/><polygon points="-8.7,288.1 -13.8,286.0 -11.3,257.0" fill="#e21919"/><polygon points="-8.7,288.1 -11.3,257.0 0.5,292.0" fill="#e21919"/><polygon points="-11.8,286.9 -5.2,305.1 -11.9,269.3" fill="#7a0c0c"/><polygon points="-11.5,220.2 -0.6,229.5 -11.3,257.0" fill="#b40e0e"/><polygon points="-11.5,220.2 -11.3,257.0 -17.5,215.1" fill="#b80f0f"/><polygon points="-11.5,220.2 -17.5,215.1 0.6,186.3" fill="#e21919"/><polygon points="-11.5,220.2 0.6,186.3 -0.6,229.5" fill="#da1717"/><polygon points="-15.2,217.1 -11.8,243.0 -4.8,200.2" fill="#7a0c0c"/><polygon points="17.2,149.0 26.7,164.6 0.6,186.3" fill="#cc0f0f"/><polygon points="17.2,149.0 0.6,186.3 12.1,140.6" fill="#d41111"/><polygon points="17.2,149.0 12.1,140.6 45.9,121.8" fill="#eb1818"/><polygon points="17.2,149.0 45.9,121.8 26.7,164.6" fill="#dc1313"/><polygon points="14.1,143.9 6.3,171.4 33.5,131.8" fill="#7a0c0c"/><polygon points="78.9,94.0 83.9,114.7 45.9,121.8" fill="#e41111"/><polygon points="78.9,94.0 45.9,121.8 76.2,82.7" fill="#ef1414"/><polygon points="78.9,94.0 76.2,82.7 119.9,89.5" fill="#ee1414"/><polygon points="78.9,94.0 119.9,89.5 83.9,114.7" fill="#e11010"/><polygon points="77.3,87.1 61.6,107.5 99.5,92.1" fill="#a81111"/><polygon points="161.3,84.3 159.6,105.6 119.9,89.5" fill="#ed1414"/><polygon points="161.3,84.3 119.9,89.5 162.2,72.7" fill="#fa1818"/><polygon points="161.3,84.3 162.2,72.7 200.3,100.6" fill="#e51111"/><polygon points="161.3,84.3 200.3,100.6 159.6,105.6" fill="#dd0e0e"/><polygon points="161.9,77.2 140.4,86.8 181.4,90.9" fill="#a81111"/><polygon points="234.3,123.3 227.0,140.8 200.3,100.6" fill="#f91818"/><polygon points="234.3,123.3 200.3,100.6 238.2,113.9" fill="#fc1919"/><polygon points="234.3,123.3 238.2,113.9 256.7,160.1" fill="#dd0e0e"/><polygon points="234.3,123.3 256.7,160.1 227.0,140.8" fill="#dc0e0e"/><polygon points="236.7,117.5 217.8,111.8 246.5,141.7" fill="#a81111"/><polygon points="273.3,194.4 264.0,205.3 256.7,160.1" fill="#f01919"/><polygon points="273.3,194.4 256.7,160.1 278.4,188.5" fill="#f01919"/><polygon points="273.3,194.4 278.4,188.5 277.1,233.2" fill="#c30e0e"/><polygon points="273.3,194.4 277.1,233.2 264.0,205.3" fill="#c70f0f"/><polygon points="276.4,190.8 264.3,173.7 276.2,218.4" fill="#8e0e0e"/><polygon points="277.4,266.1 269.6,270.8 277.1,233.2" fill="#cb1919"/><polygon points="277.4,266.1 277.1,233.2 281.6,263.5" fill="#cb1919"/><polygon points="277.4,266.1 281.6,263.5 288.3,288.8" fill="#960e0e"/><polygon points="277.4,266.1 288.3,288.8 269.6,270.8" fill="#970e0e"/><polygon points="280.0,264.5 277.8,246.9 283.0,280.2" fill="#8e0e0e"/><polygon points="302.7,311.2 294.1,313.2 288.3,288.8" fill="#cb1919"/><polygon points="302.7,311.2 288.3,288.8 307.4,310.1" fill="#cb1919"/><polygon points="302.7,311.2 307.4,310.1 307.9,337.0" fill="#950e0e"/><polygon points="302.7,311.2 307.9,337.0 294.1,313.2" fill="#9a0f0f"/><polygon points="305.6,310.5 294.4,297.4 306.7,326.5" fill="#8e0e0e"/><polygon points="301.9,389.1 294.1,387.2 311.3,363.7" fill="#891919"/><polygon points="301.9,389.1 311.3,363.7 306.1,390.1" fill="#851818"/><polygon points="301.9,389.1 306.1,390.1 284.1,409.9" fill="#4b1111"/><polygon points="301.9,389.1 284.1,409.9 294.1,387.2" fill="#5d1313"/><polygon points="305.3,389.9 307.5,374.1 291.5,402.1" fill="#860d0d"/><polygon points="273.2,431.9 265.9,427.4 284.1,409.9" fill="#891919"/><polygon points="273.2,431.9 284.1,409.9 277.2,434.3" fill="#7f1717"/><polygon points="273.2,431.9 277.2,434.3 268.6,460.2" fill="#390f0f"/><polygon points="273.2,431.9 268.6,460.2 265.9,427.4" fill="#471010"/><polygon points="276.4,433.9 277.2,417.5 270.6,448.3" fill="#860d0d"/><polygon points="261.9,493.2 254.5,484.4 268.6,460.2" fill="#ae1919"/><polygon points="261.9,493.2 268.6,460.2 265.9,497.8" fill="#ae1919"/><polygon points="261.9,493.2 265.9,497.8 246.4,524.2" fill="#6d1010"/><polygon points="261.9,493.2 246.4,524.2 254.5,484.4" fill="#801212"/><polygon points="265.1,496.9 266.1,472.5 253.1,511.4" fill="#860d0d"/><polygon points="225.4,557.1 219.7,543.1 246.4,524.2" fill="#ba1919"/><polygon points="225.4,557.1 246.4,524.2 228.5,564.6" fill="#ae1717"/><polygon points="225.4,557.1 228.5,564.6 194.0,576.2" fill="#941212"/><polygon points="225.4,557.1 194.0,576.2 219.7,543.1" fill="#ac1616"/><polygon points="227.9,563.1 238.9,537.5 207.0,568.8" fill="#860d0d"/><polygon points="158.7,592.0 157.4,575.6 194.0,576.2" fill="#ac1616"/><polygon points="158.7,592.0 194.0,576.2 159.4,600.8" fill="#971313"/><polygon points="158.7,592.0 159.4,600.8 121.0,587.5" fill="#ac1616"/><polygon points="158.7,592.0 121.0,587.5 157.4,575.6" fill="#ba1919"/><polygon points="159.2,599.1 180.3,583.1 135.9,589.1" fill="#860d0d"/><polygon points="85.2,576.8 88.9,561.5 121.0,587.5" fill="#941212"/><polygon points="85.2,576.8 121.0,587.5 83.2,585.1" fill="#810f0f"/><polygon points="85.2,576.8 83.2,585.1 57.4,548.5" fill="#ba1919"/><polygon points="85.2,576.8 57.4,548.5 88.9,561.5" fill="#ba1919"/><polygon points="83.6,583.5 106.4,583.6 67.7,560.1" fill="#860d0d"/><polygon points="36.9,517.7 43.2,507.5 57.4,548.5" fill="#6b0f0f"/><polygon points="36.9,517.7 57.4,548.5 33.5,523.2" fill="#660e0e"/><polygon points="36.9,517.7 33.5,523.2 25.8,483.3" fill="#ac1919"/><polygon points="36.9,517.7 25.8,483.3 43.2,507.5" fill="#ac1919"/><polygon points="34.2,522.1 48.5,536.2 30.3,495.6" fill="#860d0d"/><polygon points="17.6,454.2 23.8,448.9 25.8,483.3" fill="#520e0e"/><polygon points="17.6,454.2 25.8,483.3 14.2,457.1" fill="#530e0e"/><polygon points="17.6,454.2 14.2,457.1 -1.5,436.4" fill="#a01919"/><polygon points="17.6,454.2 -1.5,436.4 23.8,448.9" fill="#a01919"/><polygon points="14.9,456.5 22.0,471.4 6.7,443.4" fill="#860d0d"/><polygon points="-20.3,416.1 -12.8,413.0 -1.5,436.4" fill="#580f0f"/><polygon points="-20.3,416.1 -1.5,436.4 -24.3,417.8" fill="#520e0e"/><polygon points="-20.3,416.1 -24.3,417.8 -29.2,390.4" fill="#a01919"/><polygon points="-20.3,416.1 -29.2,390.4 -12.8,413.0" fill="#a01919"/><polygon points="-23.5,417.5 -9.4,428.8 -26.6,401.0" fill="#860d0d"/><polygon points="-32.1,363.3 -24.1,362.7 -29.2,390.4" fill="#b30e0e"/><polygon points="-32.1,363.3 -29.2,390.4 -36.5,363.6" fill="#b70f0f"/><polygon points="-32.1,363.3 -36.5,363.6 -25.8,336.7" fill="#e21919"/><polygon points="-32.1,363.3 -25.8,336.7 -24.1,362.7" fill="#e01818"/><polygon points="-34.8,363.5 -31.0,379.6 -28.7,347.1" fill="#7a0c0c"/><polygon points="-17.6,311.9 -9.8,313.8 -25.8,336.7" fill="#b60e0e"/><polygon points="-17.6,311.9 -25.8,336.7 -21.8,310.9" fill="#be1010"/><polygon points="-17.6,311.9 -21.8,310.9 -13.8,286.0" fill="#e21919"/><polygon points="-17.6,311.9 -13.8,286.0 -9.8,313.8" fill="#e11818"/><polygon points="-20.2,311.3 -22.4,326.6 -11.2,298.0" fill="#7a0c0c"/><polygon points="-20.8,251.1 -11.3,257.0 -13.8,286.0" fill="#b30e0e"/><polygon points="-20.8,251.1 -13.8,286.0 -25.9,248.0" fill="#b50e0e"/><polygon points="-20.8,251.1 -25.9,248.0 -17.5,215.1" fill="#e21919"/><polygon points="-20.8,251.1 -17.5,215.1 -11.3,257.0" fill="#e21919"/><polygon points="-24.0,249.2 -18.3,272.2 -19.3,230.0" fill="#7a0c0c"/><polygon points="-9.1,174.9 0.6,186.3 -17.5,215.1" fill="#ca0e0e"/><polygon points="-9.1,174.9 -17.5,215.1 -14.3,168.8" fill="#cf1010"/><polygon points="-9.1,174.9 -14.3,168.8 12.1,140.6" fill="#ee1919"/><polygon points="-9.1,174.9 12.1,140.6 0.6,186.3" fill="#e31616"/><polygon points="-12.3,171.2 -14.7,199.7 2.7,154.0" fill="#7a0c0c"/><polygon points="39.0,105.1 45.9,121.8 12.1,140.6" fill="#e11010"/><polygon points="39.0,105.1 12.1,140.6 35.3,96.1" fill="#ea1313"/><polygon points="39.0,105.1 35.3,96.1 76.2,82.7" fill="#f51616"/><polygon points="39.0,105.1 76.2,82.7 45.9,121.8" fill="#e91212"/><polygon points="36.7,99.6 24.4,122.4 56.9,93.1" fill="#a81111"/><polygon points="118.4,70.0 119.9,89.5 76.2,82.7" fill="#ea1313"/><polygon points="118.4,70.0 76.2,82.7 117.6,59.5" fill="#f61717"/><polygon points="118.4,70.0 117.6,59.5 162.2,72.7" fill="#ea1313"/><polygon points="118.4,70.0 162.2,72.7 119.9,89.5" fill="#e00f0f"/><polygon points="117.9,63.6 97.1,76.6 140.4,71.2" fill="#a81111"/><polygon points="204.7,82.3 200.3,100.6 162.2,72.7" fill="#f41616"/><polygon points="204.7,82.3 162.2,72.7 207.1,72.5" fill="#fc1919"/><polygon points="204.7,82.3 207.1,72.5 238.2,113.9" fill="#df0f0f"/><polygon points="204.7,82.3 238.2,113.9 200.3,100.6" fill="#dc0e0e"/><polygon points="206.1,76.3 183.9,75.6 222.3,98.0" fill="#a81111"/><polygon points="264.8,147.1 256.7,160.1 238.2,113.9" fill="#f01919"/><polygon points="264.8,147.1 238.2,113.9 269.1,140.1" fill="#f01919"/><polygon points="264.8,147.1 269.1,140.1 278.4,188.5" fill="#c30e0e"/><polygon points="264.8,147.1 278.4,188.5 256.7,160.1" fill="#c50e0e"/><polygon points="267.4,142.8 249.8,126.7 274.1,171.9" fill="#8e0e0e"/><polygon points="285.2,226.3 277.1,233.2 278.4,188.5" fill="#e41919"/><polygon points="285.2,226.3 278.4,188.5 289.6,222.6" fill="#e41919"/><polygon points="285.2,226.3 289.6,222.6 281.6,263.5" fill="#b10e0e"/><polygon points="285.2,226.3 281.6,263.5 277.1,233.2" fill="#b60f0f"/><polygon points="287.9,224.0 282.1,203.8 283.5,249.4" fill="#8e0e0e"/><polygon points="295.8,285.7 288.3,288.8 281.6,263.5" fill="#cb1919"/><polygon points="295.8,285.7 281.6,263.5 299.8,284.1" fill="#cb1919"/><polygon points="295.8,285.7 299.8,284.1 307.4,310.1" fill="#960e0e"/><polygon points="295.8,285.7 307.4,310.1 288.3,288.8" fill="#970e0e"/><polygon points="298.3,284.7 285.9,273.0 303.2,300.1" fill="#8e0e0e"/><polygon points="315.9,336.4 307.9,337.0 307.4,310.1" fill="#cb1919"/><polygon points="315.9,336.4 307.4,310.1 320.3,336.1" fill="#cb1919"/><polygon points="315.9,336.4 320.3,336.1 311.3,363.7" fill="#980e0e"/><polygon points="315.9,336.4 311.3,363.7 307.9,337.0" fill="#a11010"/><polygon points="318.6,336.2 311.7,320.3 314.0,353.0" fill="#8e0e0e"/><polygon points="318.5,364.3 311.3,363.7 320.3,336.1" fill="#cb1919"/><polygon points="318.5,364.3 320.3,336.1 322.4,364.6" fill="#cb1919"/><polygon points="318.5,364.3 322.4,364.6 306.1,390.1" fill="#9e1010"/><polygon points="318.5,364.3 306.1,390.1 311.3,363.7" fill="#a71111"/><polygon points="320.9,364.5 320.5,347.4 311.0,380.1" fill="#8e0e0e"/><polygon points="290.8,412.7 284.1,409.9 306.1,390.1" fill="#891919"/><polygon points="290.8,412.7 306.1,390.1 294.4,414.2" fill="#7b1717"/><polygon points="290.8,412.7 294.4,414.2 277.2,434.3" fill="#451010"/><polygon points="290.8,412.7 277.2,434.3 284.1,409.9" fill="#571212"/><polygon points="293.7,413.9 300.5,399.6 278.9,423.8" fill="#860d0d"/><polygon points="275.5,466.0 268.6,460.2 277.2,434.3" fill="#a21919"/><polygon points="275.5,466.0 277.2,434.3 279.1,469.2" fill="#a21919"/><polygon points="275.5,466.0 279.1,469.2 265.9,497.8" fill="#550f0f"/><polygon points="275.5,466.0 265.9,497.8 268.6,460.2" fill="#641111"/><polygon points="278.4,468.6 277.0,446.6 269.4,484.0" fill="#860d0d"/><polygon points="252.7,534.5 246.4,524.2 265.9,497.8" fill="#ae1919"/><polygon points="252.7,534.5 265.9,497.8 256.1,540.0" fill="#ab1818"/><polygon points="252.7,534.5 256.1,540.0 228.5,564.6" fill="#751111"/><polygon points="252.7,534.5 228.5,564.6 246.4,524.2" fill="#891313"/><polygon points="255.4,538.9 261.3,512.1 239.0,552.8" fill="#860d0d"/><polygon points="197.3,590.3 194.0,576.2 228.5,564.6" fill="#b41818"/><polygon points="197.3,590.3 228.5,564.6 199.1,597.8" fill="#a31515"/><polygon points="197.3,590.3 199.1,597.8 159.4,600.8" fill="#9f1414"/><polygon points="197.3,590.3 159.4,600.8 194.0,576.2" fill="#b41818"/><polygon points="198.8,596.4 216.7,575.2 174.7,596.4" fill="#860d0d"/><polygon points="119.8,602.1 121.0,587.5 159.4,600.8" fill="#9e1414"/><polygon points="119.8,602.1 159.4,600.8 119.2,609.8" fill="#8a1111"/><polygon points="119.8,602.1 119.2,609.8 83.2,585.1" fill="#b91818"/><polygon points="119.8,602.1 83.2,585.1 121.0,587.5" fill="#ba1919"/><polygon points="119.3,608.3 143.6,601.3 97.5,591.6" fill="#860d0d"/><polygon points="52.5,560.4 57.4,548.5 83.2,585.1" fill="#851010"/><polygon points="52.5,560.4 83.2,585.1 49.8,566.8" fill="#7b0e0e"/><polygon points="52.5,560.4 49.8,566.8 33.5,523.2" fill="#ba1919"/><polygon points="52.5,560.4 33.5,523.2 57.4,548.5" fill="#ba1919"/><polygon points="50.4,565.5 70.2,575.7 40.1,538.0" fill="#860d0d"/><polygon points="19.9,490.1 25.8,483.3 33.5,523.2" fill="#670e0e"/><polygon points="19.9,490.1 33.5,523.2 16.9,493.8" fill="#670e0e"/><polygon points="19.9,490.1 16.9,493.8 14.2,457.1" fill="#ac1919"/><polygon points="19.9,490.1 14.2,457.1 25.8,483.3" fill="#ac1919"/><polygon points="17.4,493.1 28.2,508.6 16.0,469.8" fill="#860d0d"/><polygon points="-7.7,440.2 -1.5,436.4 14.2,457.1" fill="#5c0f0f"/><polygon points="-7.7,440.2 14.2,457.1 -11.0,442.2" fill="#540e0e"/><polygon points="-7.7,440.2 -11.0,442.2 -24.3,417.8" fill="#a01919"/><polygon points="-7.7,440.2 -24.3,417.8 -1.5,436.4" fill="#a01919"/><polygon points="-10.4,441.8 6.4,450.0 -18.2,427.2" fill="#860d0d"/><polygon points="-36.3,392.1 -29.2,390.4 -24.3,417.8" fill="#530e0e"/><polygon points="-36.3,392.1 -24.3,417.8 -40.1,393.0" fill="#520e0e"/><polygon points="-36.3,392.1 -40.1,393.0 -36.5,363.6" fill="#a01919"/><polygon points="-36.3,392.1 -36.5,363.6 -29.2,390.4" fill="#a01919"/><polygon points="-39.4,392.8 -30.1,408.0 -36.9,374.9" fill="#860d0d"/><polygon points="-33.1,336.1 -25.8,336.7 -36.5,363.6" fill="#b50e0e"/><polygon points="-33.1,336.1 -36.5,363.6 -36.9,335.8" fill="#ba0f0f"/><polygon points="-33.1,336.1 -36.9,335.8 -21.8,310.9" fill="#e21919"/><polygon points="-33.1,336.1 -21.8,310.9 -25.8,336.7" fill="#dc1717"/><polygon points="-35.4,335.9 -35.6,352.5 -26.3,320.7" fill="#7a0c0c"/><polygon points="-21.4,282.9 -13.8,286.0 -21.8,310.9" fill="#b40e0e"/><polygon points="-21.4,282.9 -21.8,310.9 -25.4,281.2" fill="#b80f0f"/><polygon points="-21.4,282.9 -25.4,281.2 -25.9,248.0" fill="#e21919"/><polygon points="-21.4,282.9 -25.9,248.0 -13.8,286.0" fill="#e21919"/><polygon points="-23.9,281.8 -17.0,301.5 -26.1,261.7" fill="#7a0c0c"/><polygon points="-26.4,207.4 -17.5,215.1 -25.9,248.0" fill="#b40e0e"/><polygon points="-26.4,207.4 -25.9,248.0 -31.2,203.3" fill="#b80f0f"/><polygon points="-26.4,207.4 -31.2,203.3 -14.3,168.8" fill="#e21919"/><polygon points="-26.4,207.4 -14.3,168.8 -17.5,215.1" fill="#de1818"/><polygon points="-29.4,204.9 -26.7,232.5 -19.9,184.5" fill="#7a0c0c"/><polygon points="4.3,127.8 12.1,140.6 -14.3,168.8" fill="#cd0f0f"/><polygon points="4.3,127.8 -14.3,168.8 0.1,121.0" fill="#d31111"/><polygon points="4.3,127.8 0.1,121.0 35.3,96.1" fill="#ea1818"/><polygon points="4.3,127.8 35.3,96.1 12.1,140.6" fill="#df1414"/><polygon points="1.7,123.6 -8.1,152.1 21.7,107.6" fill="#7a0c0c"/><polygon points="72.2,65.6 76.2,82.7 35.3,96.1" fill="#e51111"/><polygon points="72.2,65.6 35.3,96.1 70.0,56.6" fill="#ee1414"/><polygon points="72.2,65.6 70.0,56.6 117.6,59.5" fill="#ed1414"/><polygon points="72.2,65.6 117.6,59.5 76.2,82.7" fill="#e31010"/><polygon points="70.8,60.0 52.7,80.0 94.9,62.6" fill="#a81111"/><polygon points="163.6,55.1 162.2,72.7 117.6,59.5" fill="#ef1414"/><polygon points="163.6,55.1 117.6,59.5 164.4,45.8" fill="#f91818"/><polygon points="163.6,55.1 164.4,45.8 207.1,72.5" fill="#e41111"/><polygon points="163.6,55.1 207.1,72.5 162.2,72.7" fill="#dd0e0e"/><polygon points="164.1,49.4 140.4,57.0 186.1,61.7" fill="#a81111"/><polygon points="244.2,99.5 238.2,113.9 207.1,72.5" fill="#fc1919"/><polygon points="244.2,99.5 207.1,72.5 247.4,91.8" fill="#fc1919"/><polygon points="244.2,99.5 247.4,91.8 269.1,140.1" fill="#dc0e0e"/><polygon points="244.2,99.5 269.1,140.1 238.2,113.9" fill="#dc0e0e"/><polygon points="246.2,94.8 226.4,85.5 257.9,119.4" fill="#a81111"/><polygon points="286.1,179.5 278.4,188.5 269.1,140.1" fill="#f01919"/><polygon points="286.1,179.5 269.1,140.1 290.1,174.7" fill="#f01919"/><polygon points="286.1,179.5 290.1,174.7 289.6,222.6" fill="#c40e0e"/><polygon points="286.1,179.5 289.6,222.6 278.4,188.5" fill="#c70f0f"/><polygon points="288.6,176.6 277.1,155.6 289.0,206.1" fill="#8e0e0e"/><polygon points="288.0,259.6 281.6,263.5 289.6,222.6" fill="#cb1919"/><polygon points="288.0,259.6 289.6,222.6 291.4,257.5" fill="#cb1919"/><polygon points="288.0,259.6 291.4,257.5 299.8,284.1" fill="#960e0e"/><polygon points="288.0,259.6 299.8,284.1 281.6,263.5" fill="#960e0e"/><polygon points="290.1,258.3 289.7,238.0 294.1,274.8" fill="#8e0e0e"/><polygon points="314.5,308.4 307.4,310.1 299.8,284.1" fill="#cb1919"/><polygon points="314.5,308.4 299.8,284.1 318.2,307.5" fill="#cb1919"/><polygon points="314.5,308.4 318.2,307.5 320.3,336.1" fill="#950e0e"/><polygon points="314.5,308.4 320.3,336.1 307.4,310.1" fill="#990f0f"/><polygon points="316.8,307.8 306.1,293.4 318.9,324.8" fill="#8e0e0e"/><polygon points="312.5,391.7 306.1,390.1 322.4,364.6" fill="#891919"/><polygon points="312.5,391.7 322.4,364.6 316.1,392.5" fill="#861818"/><polygon points="312.5,391.7 316.1,392.5 294.4,414.2" fill="#4b1111"/><polygon points="312.5,391.7 294.4,414.2 306.1,390.1" fill="#591313"/><polygon points="315.3,392.4 318.5,375.7 302.0,405.7" fill="#860d0d"/><polygon points="283.1,438.0 277.2,434.3 294.4,414.2" fill="#891919"/><polygon points="283.1,438.0 294.4,414.2 286.5,440.1" fill="#811818"/><polygon points="283.1,438.0 286.5,440.1 279.1,469.2" fill="#390f0f"/><polygon points="283.1,438.0 279.1,469.2 277.2,434.3" fill="#421010"/><polygon points="285.8,439.6 287.2,422.4 281.0,456.2" fill="#860d0d"/><polygon points="271.9,504.9 265.9,497.8 279.1,469.2" fill="#ae1919"/><polygon points="271.9,504.9 279.1,469.2 275.3,508.9" fill="#ae1919"/><polygon points="271.9,504.9 275.3,508.9 256.1,540.0" fill="#6d1010"/><polygon points="271.9,504.9 256.1,540.0 265.9,497.8" fill="#7a1111"/><polygon points="274.6,508.1 276.4,482.6 263.0,525.5" fill="#860d0d"/><polygon points="233.2,575.8 228.5,564.6 256.1,540.0" fill="#ba1919"/><polygon points="233.2,575.8 256.1,540.0 235.8,582.3" fill="#b01717"/><polygon points="233.2,575.8 235.8,582.3 199.1,597.8" fill="#951212"/><polygon points="233.2,575.8 199.1,597.8 228.5,564.6" fill="#a71515"/><polygon points="235.3,581.0 248.0,554.7 213.3,589.5" fill="#860d0d"/><polygon points="160.4,614.0 159.4,600.8 199.1,597.8" fill="#a91616"/><polygon points="160.4,614.0 199.1,597.8 161.0,621.5" fill="#981313"/><polygon points="160.4,614.0 161.0,621.5 119.2,609.8" fill="#ae1717"/><polygon points="160.4,614.0 119.2,609.8 159.4,600.8" fill="#ba1919"/><polygon points="160.9,620.0 184.2,605.2 135.5,611.5" fill="#860d0d"/><polygon points="80.2,597.4 83.2,585.1 119.2,609.8" fill="#901212"/><polygon points="80.2,597.4 119.2,609.8 78.5,604.5" fill="#820f0f"/><polygon points="80.2,597.4 78.5,604.5 49.8,566.8" fill="#ba1919"/><polygon points="80.2,597.4 49.8,566.8 83.2,585.1" fill="#ba1919"/><polygon points="78.8,603.1 103.3,605.4 61.0,579.7" fill="#860d0d"/><polygon points="28.4,531.4 33.5,523.2 49.8,566.8" fill="#690e0e"/><polygon points="28.4,531.4 49.8,566.8 25.5,536.2" fill="#660e0e"/><polygon points="28.4,531.4 25.5,536.2 16.9,493.8" fill="#ac1919"/><polygon points="28.4,531.4 16.9,493.8 33.5,523.2" fill="#ac1919"/><polygon points="26.1,535.2 40.3,552.7 21.6,507.2" fill="#860d0d"/><polygon points="9.2,461.4 14.2,457.1 16.9,493.8" fill="#510e0e"/><polygon points="9.2,461.4 16.9,493.8 6.3,463.8" fill="#530e0e"/><polygon points="9.2,461.4 6.3,463.8 -11.0,442.2" fill="#a01919"/><polygon points="9.2,461.4 -11.0,442.2 14.2,457.1" fill="#a01919"/><polygon points="6.9,463.3 13.1,480.6 -2.4,449.8" fill="#860d0d"/><polygon points="-30.3,420.3 -24.3,417.8 -11.0,442.2" fill="#570f0f"/><polygon points="-30.3,420.3 -11.0,442.2 -33.7,421.7" fill="#520e0e"/><polygon points="-30.3,420.3 -33.7,421.7 -40.1,393.0" fill="#a01919"/><polygon points="-30.3,420.3 -40.1,393.0 -24.3,417.8" fill="#a01919"/><polygon points="-33.1,421.4 -19.2,434.0 -37.3,404.2" fill="#860d0d"/><polygon points="-43.0,364.1 -36.5,363.6 -40.1,393.0" fill="#b40e0e"/><polygon points="-43.0,364.1 -40.1,393.0 -46.7,364.4" fill="#b60f0f"/><polygon points="-43.0,364.1 -46.7,364.4 -36.9,335.8" fill="#e21919"/><polygon points="-43.0,364.1 -36.9,335.8 -36.5,363.6" fill="#e21919"/><polygon points="-45.2,364.3 -41.9,381.5 -39.8,346.9" fill="#7a0c0c"/><polygon points="-28.2,309.4 -21.8,310.9 -36.9,335.8" fill="#b70f0f"/><polygon points="-28.2,309.4 -36.9,335.8 -31.8,308.5" fill="#be1010"/><polygon points="-28.2,309.4 -31.8,308.5 -25.4,281.2" fill="#e21919"/><polygon points="-28.2,309.4 -25.4,281.2 -21.8,310.9" fill="#e21919"/><polygon points="-30.3,308.8 -33.4,325.1 -22.0,294.3" fill="#7a0c0c"/><polygon points="-33.6,243.3 -25.9,248.0 -25.4,281.2" fill="#b30e0e"/><polygon points="-33.6,243.3 -25.4,281.2 -38.0,240.6" fill="#b50e0e"/><polygon points="-33.6,243.3 -38.0,240.6 -31.2,203.3" fill="#e21919"/><polygon points="-33.6,243.3 -31.2,203.3 -25.9,248.0" fill="#e21919"/><polygon points="-36.2,241.6 -30.8,266.0 -32.8,219.8" fill="#7a0c0c"/><polygon points="-22.1,159.6 -14.3,168.8 -31.2,203.3" fill="#cb0f0f"/><polygon points="-22.1,159.6 -31.2,203.3 -26.6,154.4" fill="#cf1010"/><polygon points="-22.1,159.6 -26.6,154.4 0.1,121.0" fill="#ee1919"/><polygon points="-22.1,159.6 0.1,121.0 -14.3,168.8" fill="#e61616"/><polygon points="-24.8,156.5 -28.3,186.4 -10.0,136.0" fill="#7a0c0c"/><polygon points="29.7,82.5 35.3,96.1 0.1,121.0" fill="#e21010"/><polygon points="29.7,82.5 0.1,121.0 26.5,74.8" fill="#e91212"/><polygon points="29.7,82.5 26.5,74.8 70.0,56.6" fill="#f51616"/><polygon points="29.7,82.5 70.0,56.6 35.3,96.1" fill="#ec1313"/><polygon points="27.8,77.9 13.6,100.9 48.9,68.3" fill="#a81111"/><polygon points="116.4,43.8 117.6,59.5 70.0,56.6" fill="#ec1313"/><polygon points="116.4,43.8 70.0,56.6 115.7,34.9" fill="#f61717"/><polygon points="116.4,43.8 115.7,34.9 164.4,45.8" fill="#e91212"/><polygon points="116.4,43.8 164.4,45.8 117.6,59.5" fill="#e11010"/><polygon points="115.9,38.5 92.9,50.1 140.4,44.3" fill="#a81111"/><polygon points="210.6,57.7 207.1,72.5 164.4,45.8" fill="#f61717"/><polygon points="210.6,57.7 164.4,45.8 212.7,49.3" fill="#fc1919"/><polygon points="210.6,57.7 212.7,49.3 247.4,91.8" fill="#de0f0f"/><polygon points="210.6,57.7 247.4,91.8 207.1,72.5" fill="#dc0e0e"/><polygon points="211.9,52.6 188.1,49.2 230.0,74.3" fill="#a81111"/><polygon points="275.5,129.5 269.1,140.1 247.4,91.8" fill="#f01919"/><polygon points="275.5,129.5 247.4,91.8 279.2,123.5" fill="#f01919"/><polygon points="275.5,129.5 279.2,123.5 290.1,174.7" fill="#c30e0e"/><polygon points="275.5,129.5 290.1,174.7 269.1,140.1" fill="#c40e0e"/><polygon points="277.8,125.9 259.8,106.4 285.8,156.4" fill="#8e0e0e"/><polygon points="296.1,217.1 289.6,222.6 290.1,174.7" fill="#e41919"/><polygon points="296.1,217.1 290.1,174.7 299.9,213.9" fill="#e41919"/><polygon points="296.1,217.1 299.9,213.9 291.4,257.5" fill="#b20f0f"/><polygon points="296.1,217.1 291.4,257.5 289.6,222.6" fill="#b50f0f"/><polygon points="298.4,215.1 293.7,191.9 293.9,242.2" fill="#8e0e0e"/><polygon points="305.8,281.6 299.8,284.1 291.4,257.5" fill="#cb1919"/><polygon points="305.8,281.6 291.4,257.5 309.3,280.2" fill="#cb1919"/><polygon points="305.8,281.6 309.3,280.2 318.2,307.5" fill="#960e0e"/><polygon points="305.8,281.6 318.2,307.5 299.8,284.1" fill="#960e0e"/><polygon points="307.9,280.7 295.7,267.8 313.8,296.8" fill="#8e0e0e"/><polygon points="326.8,335.6 320.3,336.1 318.2,307.5" fill="#cb1919"/><polygon points="326.8,335.6 318.2,307.5 330.5,335.3" fill="#cb1919"/><polygon points="326.8,335.6 330.5,335.3 322.4,364.6" fill="#990f0f"/><polygon points="326.8,335.6 322.4,364.6 320.3,336.1" fill="#9f1010"/><polygon points="329.0,335.4 322.6,318.4 325.1,353.2" fill="#8e0e0e"/><polygon points="328.6,365.1 322.4,364.6 330.5,335.3" fill="#cb1919"/><polygon points="328.6,365.1 330.5,335.3 332.3,365.4" fill="#cb1919"/><polygon points="328.6,365.1 332.3,365.4 316.1,392.5" fill="#9e1010"/><polygon points="328.6,365.1 316.1,392.5 322.4,364.6" fill="#a51111"/><polygon points="330.8,365.3 330.7,347.3 321.1,381.9" fill="#8e0e0e"/><polygon points="300.1,416.6 294.4,414.2 316.1,392.5" fill="#891919"/><polygon points="300.1,416.6 316.1,392.5 303.5,418.0" fill="#7c1717"/><polygon points="300.1,416.6 303.5,418.0 286.5,440.1" fill="#441010"/><polygon points="300.1,416.6 286.5,440.1 294.4,414.2" fill="#531212"/><polygon points="302.8,417.7 310.3,402.7 287.9,428.6" fill="#860d0d"/><polygon points="284.9,474.1 279.1,469.2 286.5,440.1" fill="#a21919"/><polygon points="284.9,474.1 286.5,440.1 288.4,477.1" fill="#a21919"/><polygon points="284.9,474.1 288.4,477.1 275.3,508.9" fill="#550f0f"/><polygon points="284.9,474.1 275.3,508.9 279.1,469.2" fill="#601010"/><polygon points="287.7,476.5 286.5,453.3 278.9,493.7" fill="#860d0d"/><polygon points="261.4,548.8 256.1,540.0 275.3,508.9" fill="#ae1919"/><polygon points="261.4,548.8 275.3,508.9 264.6,554.1" fill="#ac1818"/><polygon points="261.4,548.8 264.6,554.1 235.8,582.3" fill="#751111"/><polygon points="261.4,548.8 235.8,582.3 256.1,540.0" fill="#851313"/><polygon points="264.0,553.0 270.6,524.5 247.0,569.2" fill="#860d0d"/><polygon points="202.0,609.8 199.1,597.8 235.8,582.3" fill="#b21717"/><polygon points="202.0,609.8 235.8,582.3 203.7,617.0" fill="#a41515"/><polygon points="202.0,609.8 203.7,617.0 161.0,621.5" fill="#a01414"/><polygon points="202.0,609.8 161.0,621.5 199.1,597.8" fill="#b11717"/><polygon points="203.4,615.6 223.1,593.8 177.6,616.8" fill="#860d0d"/><polygon points="118.2,622.3 119.2,609.8 161.0,621.5" fill="#9b1313"/><polygon points="118.2,622.3 161.0,621.5 117.6,629.7" fill="#8b1111"/><polygon points="118.2,622.3 117.6,629.7 78.5,604.5" fill="#b91818"/><polygon points="118.2,622.3 78.5,604.5 119.2,609.8" fill="#ba1919"/><polygon points="117.7,628.2 143.9,621.9 94.0,611.4" fill="#860d0d"/><polygon points="45.6,576.9 49.8,566.8 78.5,604.5" fill="#830f0f"/><polygon points="45.6,576.9 78.5,604.5 43.1,583.0" fill="#7b0e0e"/><polygon points="45.6,576.9 43.1,583.0 25.5,536.2" fill="#ba1919"/><polygon points="45.6,576.9 25.5,536.2 49.8,566.8" fill="#ba1919"/><polygon points="43.6,581.8 64.5,594.2 32.4,552.5" fill="#860d0d"/><polygon points="11.9,499.5 16.9,493.8 25.5,536.2" fill="#660e0e"/><polygon points="11.9,499.5 25.5,536.2 8.9,503.0" fill="#670e0e"/><polygon points="11.9,499.5 8.9,503.0 6.3,463.8" fill="#ac1919"/><polygon points="11.9,499.5 6.3,463.8 16.9,493.8" fill="#ac1919"/><polygon points="9.5,502.3 20.2,519.9 7.9,477.6" fill="#860d0d"/><polygon points="-16.3,445.5 -11.0,442.2 6.3,463.8" fill="#5b0f0f"/><polygon points="-16.3,445.5 6.3,463.8 -19.5,447.4" fill="#540e0e"/><polygon points="-16.3,445.5 -19.5,447.4 -33.7,421.7" fill="#a01919"/><polygon points="-16.3,445.5 -33.7,421.7 -11.0,442.2" fill="#a01919"/><polygon points="-18.8,447.0 -1.8,456.1 -27.4,431.7" fill="#860d0d"/><polygon points="-46.1,394.4 -40.1,393.0 -33.7,421.7" fill="#520e0e"/><polygon points="-46.1,394.4 -33.7,421.7 -49.7,395.3" fill="#520e0e"/><polygon points="-46.1,394.4 -49.7,395.3 -46.7,364.4" fill="#a01919"/><polygon points="-46.1,394.4 -46.7,364.4 -40.1,393.0" fill="#a01919"/><polygon points="-49.0,395.1 -39.8,411.3 -47.0,376.3" fill="#860d0d"/><polygon points="-43.1,335.3 -36.9,335.8 -46.7,364.4" fill="#b50e0e"/><polygon points="-43.1,335.3 -46.7,364.4 -46.8,335.0" fill="#ba0f0f"/><polygon points="-43.1,335.3 -46.8,335.0 -31.8,308.5" fill="#e21919"/><polygon points="-43.1,335.3 -31.8,308.5 -36.9,335.8" fill="#de1818"/><polygon points="-45.3,335.1 -45.8,352.6 -36.4,319.0" fill="#7a0c0c"/><polygon points="-31.9,278.5 -25.4,281.2 -31.8,308.5" fill="#b40e0e"/><polygon points="-31.9,278.5 -31.8,308.5 -35.8,276.9" fill="#b80f0f"/><polygon points="-31.9,278.5 -35.8,276.9 -38.0,240.6" fill="#e21919"/><polygon points="-31.9,278.5 -38.0,240.6 -25.4,281.2" fill="#e21919"/><polygon points="-34.2,277.5 -26.7,298.4 -37.9,255.5" fill="#7a0c0c"/><polygon points="-38.9,196.8 -31.2,203.3 -38.0,240.6" fill="#b40e0e"/><polygon points="-38.9,196.8 -38.0,240.6 -43.5,192.8" fill="#b70f0f"/><polygon points="-38.9,196.8 -43.5,192.8 -26.6,154.4" fill="#e21919"/><polygon points="-38.9,196.8 -26.6,154.4 -31.2,203.3" fill="#e01818"/><polygon points="-41.6,194.4 -39.0,223.8 -32.4,171.6" fill="#7a0c0c"/><polygon points="-6.5,110.1 0.1,121.0 -26.6,154.4" fill="#cd0f0f"/><polygon points="-6.5,110.1 -26.6,154.4 -10.5,103.5" fill="#d31111"/><polygon points="-6.5,110.1 -10.5,103.5 26.5,74.8" fill="#ea1818"/><polygon points="-6.5,110.1 26.5,74.8 0.1,121.0" fill="#e11515"/><polygon points="-8.9,106.2 -20.0,136.2 11.9,87.6" fill="#7a0c0c"/><polygon points="66.5,42.0 70.0,56.6 26.5,74.8" fill="#e61111"/><polygon points="66.5,42.0 26.5,74.8 64.5,33.3" fill="#ed1414"/><polygon points="66.5,42.0 64.5,33.3 115.7,34.9" fill="#ed1414"/><polygon points="66.5,42.0 115.7,34.9 70.0,56.6" fill="#e41111"/><polygon points="65.3,36.8 45.3,57.2 91.1,38.2" fill="#a81111"/><polygon points="165.6,30.8 164.4,45.8 115.7,34.9" fill="#f01515"/><polygon points="165.6,30.8 115.7,34.9 166.3,21.9" fill="#f91818"/><polygon points="165.6,30.8 166.3,21.9 212.7,49.3" fill="#e31010"/><polygon points="165.6,30.8 212.7,49.3 164.4,45.8" fill="#de0f0f"/><polygon points="166.0,25.5 140.5,32.3 190.0,37.4" fill="#a81111"/><polygon points="252.5,79.6 247.4,91.8 212.7,49.3" fill="#fc1919"/><polygon points="252.5,79.6 212.7,49.3 255.5,72.2" fill="#fc1919"/><polygon points="252.5,79.6 255.5,72.2 279.2,123.5" fill="#dc0e0e"/><polygon points="252.5,79.6 279.2,123.5 247.4,91.8" fill="#dc0e0e"/><polygon points="254.3,75.2 233.5,63.7 267.3,101.1" fill="#a81111"/><polygon points="296.7,167.1 290.1,174.7 279.2,123.5" fill="#f01919"/><polygon points="296.7,167.1 279.2,123.5 300.6,162.5" fill="#f01919"/><polygon points="296.7,167.1 300.6,162.5 299.9,213.9" fill="#c40e0e"/><polygon points="296.7,167.1 299.9,213.9 290.1,174.7" fill="#c60f0f"/><polygon points="299.1,164.3 287.7,140.6 299.5,195.9" fill="#8e0e0e"/><polygon points="296.8,254.2 291.4,257.5 299.9,213.9" fill="#cb1919"/><polygon points="296.8,254.2 299.9,213.9 300.0,252.2" fill="#cb1919"/><polygon points="296.8,254.2 300.0,252.2 309.3,280.2" fill="#960e0e"/><polygon points="296.8,254.2 309.3,280.2 291.4,257.5" fill="#960e0e"/><polygon points="298.7,253.0 299.5,230.6 303.3,270.3" fill="#8e0e0e"/><polygon points="324.3,306.0 318.2,307.5 309.3,280.2" fill="#cb1919"/><polygon points="324.3,306.0 309.3,280.2 327.9,305.2" fill="#cb1919"/><polygon points="324.3,306.0 327.9,305.2 330.5,335.3" fill="#950e0e"/><polygon points="324.3,306.0 330.5,335.3 318.2,307.5" fill="#980e0e"/><polygon points="326.4,305.5 315.7,290.1 329.0,323.4" fill="#8e0e0e"/></g><polygon points="55.0,367.0 57.0,355.0 66.0,350.0 67.0,335.0 85.0,326.0 94.0,311.0 102.0,311.0 110.0,301.0 130.0,300.0 145.0,292.0 152.0,300.0 161.0,292.0 176.0,302.0 196.0,304.0 199.0,316.0 210.0,315.0 217.0,331.0 231.0,345.0 216.0,360.0 210.0,371.0 202.0,378.0 189.0,374.0 186.0,376.0 182.0,392.0 157.0,394.0 136.0,406.0 122.0,392.0 110.0,404.0 87.0,391.0 64.0,387.0 61.0,370.0 60.0,369.0" fill="url(#yl)" stroke="#ff2a2a" stroke-width="1.2"/><g clip-path="url(#blobclip)" fill="none" stroke="#ff2424" stroke-width="1.6" stroke-linejoin="round"><polyline points="5.8,305.8 19.4,313.5 14.5,332.0 27.1,339.7 38.7,360.0 45.5,374.5 58.0,370.6 63.9,388.0 87.0,392.0 110.3,404.5 122.0,392.0"/><polyline points="182.0,392.5 187.0,375.5 201.6,378.4 218.0,358.0 231.6,345.5 243.2,339.7 236.4,323.2 251.0,318.4 256.8,329.0"/></g>
<g><path d="M68.8 621 V616 L74 620.6" fill="none" stroke="#14124f" stroke-width="1"/><rect x="81" y="618.2" width="186" height="1.8" fill="#14124f"/><circle cx="265" cy="620.3" r="4.4" fill="#14124f"/></g>
</svg>
<div class="a" style="left:0.0px;top:0.0px;width:620.0px;height:8.4px;background:linear-gradient(90deg,#15134f 0%,#0f0d47 16%,#1a175d 28%,#1b185f 86%,#0e0c48 92%)"></div>
<div class="a" style="left:178.2px;top:0.0px;width:47.6px;height:1.3px;background:#fff"></div>
<div class="a" style="left:565.2px;top:0.0px;width:37.8px;height:1.6px;background:#8a88b0"></div>
<div class="a" style="left:0.0px;top:8.4px;width:417.0px;height:31.4px;background:#fff"></div>
<div class="a" style="left:417.0px;top:8.4px;width:203.0px;height:31.4px;background:#f3f3f3"></div>
<div class="a" style="left:0.0px;top:39.6px;width:620.0px;height:1.0px;background:#d2d2d2"></div>
<div class="a" style="left:416.6px;top:8.4px;width:1.0px;height:31.4px;background:#d8d8d8"></div>
<svg class="a" style="left:406.5px;top:22.5px" width="6.0" height="5.0" viewBox="0 0 6 5"><path d="M0.8 1 L3 3.6 L5.2 1" fill="none" stroke="#666" stroke-width="0.9"/></svg>
<svg class="a" style="left:423.5px;top:18.0px" width="13.0" height="14.5" viewBox="0 0 13 14.5"><g stroke="#0f0f4a" stroke-width="1.3" fill="#f3f3f3"><path d="M0.5 2.6H12.5M0.5 7.2H12.5M0.5 11.8H12.5"/><circle cx="8.3" cy="2.6" r="1.5"/><circle cx="4.2" cy="7.2" r="1.5"/><circle cx="7" cy="11.8" r="1.5"/></g></svg>
<svg class="a" style="left:506.5px;top:19.3px" width="9.6" height="12.0" viewBox="0 0 9.6 12"><rect x="0.6" y="0.6" width="8.4" height="10.8" rx="1.2" fill="#0f0f4a"/><g fill="#fff"><path d="M4.8 3.6 L6.6 6 L4.8 8.4 L3 6Z"/><circle cx="2.4" cy="2.6" r="0.8"/><circle cx="7.2" cy="2.6" r="0.8"/><circle cx="2.4" cy="9.4" r="0.8"/><circle cx="7.2" cy="9.4" r="0.8"/></g></svg>
<svg class="a" style="left:546.3px;top:17.6px" width="10.2" height="13.6" viewBox="0 0 10.2 13.6"><g fill="none" stroke="#0f0f4a"><path d="M5.1 1 L8.9 6.4 L5.1 10.6 L1.3 6.4Z" stroke-width="1.25"/><path d="M1.1 8.4V13.2M2.7 10V13.2M4.3 11.8V13.2M5.9 11.8V13.2M7.5 10V13.2M9.1 8.4V13.2" stroke-width="0.85"/></g></svg>
<svg class="a" style="left:582.5px;top:19.0px" width="9.6" height="12.5" viewBox="0 0 9.6 12.5"><g fill="none" stroke="#0f0f4a" stroke-width="1.2"><path d="M4.8 0.5V6.4M2.4 4.2L4.8 6.6L7.2 4.2"/><path d="M0.8 6.5V9.2H8.8V6.5"/><path d="M0.6 11.6H9" stroke-dasharray="1.1 0.7"/></g></svg>
<div class="a" style="left:416.5px;top:51.3px;width:204.0px;height:432.2px;background:#fff;border:1px solid #cfcfcf;box-sizing:border-box"></div>
<div class="a" style="left:417.5px;top:52.3px;width:203.0px;height:22.0px;background:#f3f3f3;border-bottom:1px solid #cfcfcf"></div>
<div class="a" style="left:467.0px;top:84.0px;width:160.0px;height:17.4px;background:#fff;border:1px solid #c9c9c9;box-sizing:border-box;border-radius:1.5px"></div>
<svg class="a" style="left:601.6px;top:89.8px" width="7.0" height="7.4" viewBox="0 0 7 7.4"><polygon points="3.50,0.30 4.28,2.53 6.47,2.65 4.77,4.15 5.34,6.45 3.50,5.15 1.66,6.45 2.23,4.15 0.53,2.65 2.72,2.53" fill="#3a3a3a"/></svg>
<svg class="a" style="left:613.5px;top:90.6px" width="6.0" height="5.0" viewBox="0 0 6 5"><path d="M0.8 1 L3 3.6 L5.2 1" fill="none" stroke="#555" stroke-width="0.9"/></svg>
<div class="a" style="left:428.5px;top:109.0px;width:165.6px;height:18.8px;background:#fff;border:1px solid #c9c9c9;box-sizing:border-box;border-radius:1.5px"></div>
<svg class="a" style="left:435.5px;top:113.3px" width="7.0" height="10.5" viewBox="0 0 7 10.5"><circle cx="4" cy="3.6" r="2.4" fill="none" stroke="#333" stroke-width="1"/><path d="M2.8 5.8L0.9 9.6" stroke="#333" stroke-width="1.1"/></svg>
<svg class="a" style="left:600.5px;top:112.5px" width="9.6" height="12.0" viewBox="0 0 9.6 12"><path d="M0 1.2H9.6M0 6H9.6M0 10.8H9.6" stroke="#444" stroke-width="1.3"/></svg>
<div class="a" style="left:617.2px;top:137.0px;width:4.0px;height:86.5px;background:#0f0f4a;border-radius:2px 0 0 2px"></div>
<div class="a" style="left:428.5px;top:137.3px;width:185.6px;height:15.4px;background:#f1f1f1"></div>
<svg class="a" style="left:433.5px;top:139.1px" width="9.6" height="12.0" viewBox="0 0 9.6 12"><g fill="#1a1a1a"><rect x="0.4" y="0" width="2.6" height="1.6"/><rect x="0.4" y="3.6" width="5" height="2.2"/><rect x="0.4" y="8" width="8.8" height="3.6"/></g></svg>
<svg class="a" style="left:603.0px;top:142.9px" width="6.0" height="5.0" viewBox="0 0 6 5"><path d="M0.8 1 L3 3.6 L5.2 1" fill="none" stroke="#555" stroke-width="0.9"/></svg>
<div class="a" style="left:551.6px;top:154.3px;width:62.4px;height:15.0px;background:#fff;border:1px solid #c9c9c9;box-sizing:border-box;border-radius:1.5px"></div>
<svg class="a" style="left:525.6px;top:156.2px" width="8.0" height="11.0" viewBox="0 0 8 11"><g transform="translate(4,5.4) scale(0.72,1) rotate(-45)" fill="none" stroke="#444" stroke-width="0.95"><rect x="-5.6" y="-1.7" width="6" height="3.4" rx="1.7"/><rect x="-0.4" y="-1.7" width="6" height="3.4" rx="1.7"/></g></svg>
<svg class="a" style="left:538.4px;top:155.6px" width="8.0" height="11.0" viewBox="0 0 8 11"><path d="M3.4 2.4 A2.7 3.9 0 1 1 1.1 6.9" fill="none" stroke="#444" stroke-width="0.95"/><path d="M1.3 2.7 L3.9 0.5 L3.9 4.4Z" fill="#444"/></svg>
<div class="a" style="left:551.6px;top:171.5px;width:62.4px;height:15.0px;background:#fff;border:1px solid #c9c9c9;box-sizing:border-box;border-radius:1.5px"></div>
<svg class="a" style="left:525.6px;top:173.4px" width="8.0" height="11.0" viewBox="0 0 8 11"><g transform="translate(4,5.4) scale(0.72,1) rotate(-45)" fill="none" stroke="#444" stroke-width="0.95"><rect x="-5.6" y="-1.7" width="6" height="3.4" rx="1.7"/><rect x="-0.4" y="-1.7" width="6" height="3.4" rx="1.7"/></g></svg>
<svg class="a" style="left:538.4px;top:172.8px" width="8.0" height="11.0" viewBox="0 0 8 11"><path d="M3.4 2.4 A2.7 3.9 0 1 1 1.1 6.9" fill="none" stroke="#444" stroke-width="0.95"/><path d="M1.3 2.7 L3.9 0.5 L3.9 4.4Z" fill="#444"/></svg>
<div class="a" style="left:551.6px;top:188.6px;width:62.4px;height:15.0px;background:#fff;border:1px solid #c9c9c9;box-sizing:border-box;border-radius:1.5px"></div>
<svg class="a" style="left:526.2px;top:189.9px" width="8.0" height="11.0" viewBox="0 0 8 11"><path d="M3.4 2.4 A2.7 3.9 0 1 1 1.1 6.9" fill="none" stroke="#444" stroke-width="0.95"/><path d="M1.3 2.7 L3.9 0.5 L3.9 4.4Z" fill="#444"/></svg>
<div class="t" style="left:539.6px;top:189.3px;font-size:12px;font-style:italic;font-family:'Liberation Serif',serif;color:#222;transform:scaleX(0.85)">f<span style="font-size:5.5px;font-family:'Liberation Sans',sans-serif;font-style:normal;font-weight:bold">x</span></div>
<div class="a" style="left:551.6px;top:205.8px;width:62.4px;height:15.0px;background:#fff;border:1px solid #c9c9c9;box-sizing:border-box;border-radius:1.5px"></div>
<div class="a" style="left:551.6px;top:223.0px;width:62.4px;height:15.0px;background:#fff;border:1px solid #c9c9c9;box-sizing:border-box;border-radius:1.5px"></div>
<div class="a" style="left:551.6px;top:240.2px;width:62.4px;height:15.0px;background:#fff;border:1px solid #c9c9c9;box-sizing:border-box;border-radius:1.5px"></div>
<div class="a" style="left:551.6px;top:257.3px;width:62.4px;height:15.0px;background:#fff;border:1px solid #c9c9c9;box-sizing:border-box;border-radius:1.5px"></div>
<div class="a" style="left:551.6px;top:274.5px;width:62.4px;height:15.0px;background:#fff;border:1px solid #c9c9c9;box-sizing:border-box;border-radius:1.5px"></div>
<div class="a" style="left:551.6px;top:291.7px;width:62.4px;height:15.0px;background:#fff;border:1px solid #c9c9c9;box-sizing:border-box;border-radius:1.5px"></div>
<svg class="a" style="left:538.8px;top:293.0px" width="8.0" height="11.0" viewBox="0 0 8 11"><path d="M3.4 2.4 A2.7 3.9 0 1 1 1.1 6.9" fill="none" stroke="#444" stroke-width="0.95"/><path d="M1.3 2.7 L3.9 0.5 L3.9 4.4Z" fill="#444"/></svg>
<div class="a" style="left:428.5px;top:309.0px;width:185.6px;height:15.4px;background:#f1f1f1"></div>
<svg class="a" style="left:433.5px;top:310.8px" width="9.6" height="12.0" viewBox="0 0 9.6 12"><rect x="0.9" y="0.7" width="7.8" height="10.6" rx="1.4" fill="none" stroke="#1a1a1a" stroke-width="1.2"/><rect x="3" y="3.2" width="3.6" height="5.6" fill="none" stroke="#1a1a1a" stroke-width="0.7" stroke-dasharray="1 0.8"/></svg>
<svg class="a" style="left:603.0px;top:314.6px" width="6.0" height="5.0" viewBox="0 0 6 5"><path d="M0.8 1 L3 3.6 L5.2 1" fill="none" stroke="#555" stroke-width="0.9"/></svg>
<div class="a" style="left:551.6px;top:326.0px;width:62.4px;height:15.0px;background:#fff;border:1px solid #c9c9c9;box-sizing:border-box;border-radius:1.5px"></div>
<svg class="a" style="left:526.2px;top:327.3px" width="8.0" height="11.0" viewBox="0 0 8 11"><path d="M3.4 2.4 A2.7 3.9 0 1 1 1.1 6.9" fill="none" stroke="#444" stroke-width="0.95"/><path d="M1.3 2.7 L3.9 0.5 L3.9 4.4Z" fill="#444"/></svg>
<div class="t" style="left:539.6px;top:326.7px;font-size:12px;font-style:italic;font-family:'Liberation Serif',serif;color:#222;transform:scaleX(0.85)">f<span style="font-size:5.5px;font-family:'Liberation Sans',sans-serif;font-style:normal;font-weight:bold">x</span></div>
<div class="a" style="left:551.6px;top:343.2px;width:62.4px;height:15.0px;background:#fff;border:1px solid #c9c9c9;box-sizing:border-box;border-radius:1.5px"></div>
<div class="a" style="left:551.6px;top:360.3px;width:62.4px;height:15.0px;background:#fff;border:1px solid #c9c9c9;box-sizing:border-box;border-radius:1.5px"></div>
<div class="a" style="left:551.6px;top:377.5px;width:62.4px;height:15.0px;background:#fff;border:1px solid #c9c9c9;box-sizing:border-box;border-radius:1.5px"></div>
<svg class="a" style="left:603.0px;top:382.6px" width="6.0" height="5.0" viewBox="0 0 6 5"><path d="M0.8 1 L3 3.6 L5.2 1" fill="none" stroke="#555" stroke-width="0.9"/></svg>
<svg class="a" style="left:538.8px;top:378.8px" width="8.0" height="11.0" viewBox="0 0 8 11"><path d="M3.4 2.4 A2.7 3.9 0 1 1 1.1 6.9" fill="none" stroke="#444" stroke-width="0.95"/><path d="M1.3 2.7 L3.9 0.5 L3.9 4.4Z" fill="#444"/></svg>
<div class="a" style="left:428.5px;top:394.9px;width:185.6px;height:15.4px;background:#f1f1f1"></div>
<svg class="a" style="left:433.5px;top:396.7px" width="9.6" height="12.0" viewBox="0 0 9.6 12"><g stroke="#1a1a1a"><path d="M0.4 0.8H9.2" stroke-width="1.6"/><path d="M0.4 3.6H9.2M0.4 5.6H9.2M0.4 7.6H9.2" stroke-width="0.7" stroke-dasharray="1 0.7"/><path d="M0.4 10.6H9.2" stroke-width="2"/></g></svg>
<svg class="a" style="left:603.0px;top:400.5px" width="6.0" height="5.0" viewBox="0 0 6 5"><path d="M0.8 1 L3 3.6 L5.2 1" fill="none" stroke="#555" stroke-width="0.9"/></svg>
<div class="a" style="left:551.6px;top:411.9px;width:62.4px;height:15.0px;background:#fff;border:1px solid #c9c9c9;box-sizing:border-box;border-radius:1.5px"></div>
<div class="a" style="left:551.6px;top:429.0px;width:62.4px;height:15.0px;background:#ff9a3c;border:1px solid #c9c9c9;box-sizing:border-box;border-radius:1.5px"></div>
<svg class="a" style="left:526.2px;top:430.3px" width="8.0" height="11.0" viewBox="0 0 8 11"><path d="M3.4 2.4 A2.7 3.9 0 1 1 1.1 6.9" fill="none" stroke="#444" stroke-width="0.95"/><path d="M1.3 2.7 L3.9 0.5 L3.9 4.4Z" fill="#444"/></svg>
<div class="t" style="left:539.6px;top:429.7px;font-size:12px;font-style:italic;font-family:'Liberation Serif',serif;color:#222;transform:scaleX(0.85)">f<span style="font-size:5.5px;font-family:'Liberation Sans',sans-serif;font-style:normal;font-weight:bold">x</span></div>
<div class="a" style="left:417.5px;top:442.2px;width:203.0px;height:35.4px;background:#fff;border-top:1px solid #dcdcdc"></div>
<div class="a" style="left:422.4px;top:451.4px;width:63.0px;height:19.0px;background:#fff;border:1px solid #3282ff;box-sizing:border-box;border-radius:1.5px"></div>
<svg class="a" style="left:429.5px;top:457.6px" width="4.0" height="7.0" viewBox="0 0 4 7"><path d="M3 0.8 L1 3.4 L3 6" fill="none" stroke="#196ef0" stroke-width="0.9"/></svg>
<div class="a" style="left:417.5px;top:478.2px;width:203.0px;height:3.8px;background:#f0f0f0;border-top:1px solid #d0d0d0"></div>
<div class="a" style="left:499.2px;top:538.2px;width:122.0px;height:83.0px;background:#fff;border:1px solid #d0d0d0;box-sizing:border-box;border-radius:2px"></div>
<svg class="a" style="left:509.0px;top:552.0px" width="10.4" height="12.4" viewBox="0 0 10.4 12.4"><ellipse cx="5.2" cy="6.2" rx="4.3" ry="5.3" fill="none" stroke="#0f0f4a" stroke-width="1.25"/><path d="M5.2 3V6.4H7.6" fill="none" stroke="#0f0f4a" stroke-width="1.1"/></svg>
<svg class="a" style="left:508.6px;top:572.8px" width="10.8" height="13.4" viewBox="0 0 10.8 13.4"><ellipse cx="5.6" cy="6.4" rx="4.3" ry="5.4" fill="none" stroke="#0f0f4a" stroke-width="1.25"/><path d="M1.6 9.4 Q0.4 11.6 1 13" fill="none" stroke="#0f0f4a" stroke-width="1.1"/><circle cx="5.6" cy="6.4" r="1.1" fill="none" stroke="#0f0f4a" stroke-width="0.9"/><path d="M5.8 5.2 L6.8 3" stroke="#0f0f4a" stroke-width="0.9"/></svg>
<div class="a" style="left:509.0px;top:593.4px;width:111.0px;height:19.6px;background:#196ef0;border-radius:1.5px 0 0 1.5px"></div>
<div class="a" style="left:479.6px;top:591.8px;width:16.4px;height:19.8px;background:#fff;border:1px solid #5a96f5;box-sizing:border-box;border-radius:1.5px"></div>
<svg class="a" style="left:484.5px;top:598.5px" width="7.0" height="6.0" viewBox="0 0 7 6"><path d="M2.4 1 L0.8 3 L2.4 5M4.6 1 L6.2 3 L4.6 5" fill="none" stroke="#196ef0" stroke-width="0.9"/></svg>
<div class="a" style="left:488.6px;top:587.6px;width:9px;height:9.4px;border-radius:50%;background:#e8101a"></div>
<div class="t" style="left:-0.5px;top:18.7px;font-size:9px;font-weight:normal;font-style:normal;color:#8a8a8a;transform:scaleX(0.663)">olor scheme</div>
<div class="t" style="left:38.3px;top:18.7px;font-size:9px;font-weight:normal;font-style:normal;color:#222;transform:scaleX(0.687)">Line Type</div>
<div class="t" style="left:440.8px;top:19.0px;font-size:9px;font-weight:normal;font-style:normal;color:#222;transform:scaleX(0.676)">Draft - 0.1mm</div>
<div class="t" style="left:520.0px;top:19.0px;font-size:9px;font-weight:normal;font-style:normal;color:#222;transform:scaleX(0.627)">10%</div>
<div class="t" style="left:559.7px;top:19.0px;font-size:9px;font-weight:normal;font-style:normal;color:#222;transform:scaleX(0.751)">Off</div>
<div class="t" style="left:596.2px;top:19.0px;font-size:9px;font-weight:normal;font-style:normal;color:#222;transform:scaleX(0.743)">Off</div>
<div class="t" style="left:422.5px;top:57.8px;font-size:9px;font-weight:normal;font-style:normal;color:#4a4a4a;transform:scaleX(0.725)">Print settings</div>
<div class="t" style="left:422.7px;top:87.0px;font-size:9.5px;font-weight:normal;font-style:normal;color:#111;transform:scaleX(0.672)">Profile</div>
<div class="t" style="left:472.8px;top:86.7px;font-size:9px;font-weight:normal;font-style:normal;color:#222;transform:scaleX(0.625)">Draft</div>
<div class="t" style="left:486.2px;top:86.7px;font-size:9px;font-weight:normal;font-style:normal;color:#c8c8c8;transform:scaleX(0.618)">- 0.2mm</div>
<div class="t" style="left:448.4px;top:112.3px;font-size:9px;font-weight:normal;font-style:italic;color:#8c8c8c;transform:scaleX(0.650)">Search settings</div>
<div class="t" style="left:451.5px;top:139.6px;font-size:9px;font-weight:bold;font-style:normal;color:#1a1a1a;transform:scaleX(0.698)">Quality</div>
<div class="t" style="left:432.6px;top:156.3px;font-size:8px;font-weight:normal;font-style:italic;color:#333;transform:scaleX(0.613)">Layer Height</div>
<div class="t" style="left:555.2px;top:156.1px;font-size:8px;font-weight:normal;font-style:normal;color:#3a3a3a;transform:scaleX(0.720)">0.1</div>
<div class="t" style="left:602.4px;top:156.1px;font-size:8px;font-weight:normal;font-style:normal;color:#a0a0a0;transform:scaleX(0.690)">mm</div>
<div class="t" style="left:432.6px;top:173.5px;font-size:8px;font-weight:normal;font-style:italic;color:#333;transform:scaleX(0.644)">Initial Layer Height</div>
<div class="t" style="left:555.2px;top:173.3px;font-size:8px;font-weight:normal;font-style:normal;color:#3a3a3a;transform:scaleX(0.720)">0.3</div>
<div class="t" style="left:602.4px;top:173.3px;font-size:8px;font-weight:normal;font-style:normal;color:#a0a0a0;transform:scaleX(0.690)">mm</div>
<div class="t" style="left:432.6px;top:190.6px;font-size:8px;font-weight:normal;font-style:italic;color:#333;transform:scaleX(0.623)">Line Width</div>
<div class="t" style="left:555.2px;top:190.4px;font-size:8px;font-weight:normal;font-style:normal;color:#3a3a3a;transform:scaleX(0.720)">0.8</div>
<div class="t" style="left:602.4px;top:190.4px;font-size:8px;font-weight:normal;font-style:normal;color:#a0a0a0;transform:scaleX(0.690)">mm</div>
<div class="t" style="left:440.8px;top:207.8px;font-size:8px;font-weight:normal;font-style:normal;color:#333;transform:scaleX(0.689)">Wall Line Width</div>
<div class="t" style="left:555.2px;top:207.6px;font-size:8px;font-weight:normal;font-style:normal;color:#3a3a3a;transform:scaleX(0.720)">0.8</div>
<div class="t" style="left:602.4px;top:207.6px;font-size:8px;font-weight:normal;font-style:normal;color:#a0a0a0;transform:scaleX(0.690)">mm</div>
<div class="t" style="left:448.7px;top:225.0px;font-size:8px;font-weight:normal;font-style:normal;color:#333;transform:scaleX(0.701)">Outer Wall Line Width</div>
<div class="t" style="left:555.2px;top:224.8px;font-size:8px;font-weight:normal;font-style:normal;color:#3a3a3a;transform:scaleX(0.720)">0.8</div>
<div class="t" style="left:602.4px;top:224.8px;font-size:8px;font-weight:normal;font-style:normal;color:#a0a0a0;transform:scaleX(0.690)">mm</div>
<div class="t" style="left:448.7px;top:242.2px;font-size:8px;font-weight:normal;font-style:normal;color:#333;transform:scaleX(0.681)">Inner Wall(s) Line Width</div>
<div class="t" style="left:555.2px;top:242.0px;font-size:8px;font-weight:normal;font-style:normal;color:#3a3a3a;transform:scaleX(0.720)">0.8</div>
<div class="t" style="left:602.4px;top:242.0px;font-size:8px;font-weight:normal;font-style:normal;color:#a0a0a0;transform:scaleX(0.690)">mm</div>
<div class="t" style="left:440.8px;top:259.3px;font-size:8px;font-weight:normal;font-style:normal;color:#333;transform:scaleX(0.698)">Top/Bottom Line Width</div>
<div class="t" style="left:555.2px;top:259.1px;font-size:8px;font-weight:normal;font-style:normal;color:#3a3a3a;transform:scaleX(0.720)">0.8</div>
<div class="t" style="left:602.4px;top:259.1px;font-size:8px;font-weight:normal;font-style:normal;color:#a0a0a0;transform:scaleX(0.690)">mm</div>
<div class="t" style="left:440.8px;top:276.5px;font-size:8px;font-weight:normal;font-style:normal;color:#333;transform:scaleX(0.721)">Infill Line Width</div>
<div class="t" style="left:555.2px;top:276.3px;font-size:8px;font-weight:normal;font-style:normal;color:#3a3a3a;transform:scaleX(0.720)">0.8</div>
<div class="t" style="left:602.4px;top:276.3px;font-size:8px;font-weight:normal;font-style:normal;color:#a0a0a0;transform:scaleX(0.690)">mm</div>
<div class="t" style="left:432.6px;top:293.7px;font-size:8px;font-weight:normal;font-style:italic;color:#333;transform:scaleX(0.643)">Initial Layer Line Width</div>
<div class="t" style="left:555.2px;top:293.5px;font-size:8px;font-weight:normal;font-style:normal;color:#3a3a3a;transform:scaleX(0.720)">100.0</div>
<div class="t" style="left:608.6px;top:293.5px;font-size:8px;font-weight:normal;font-style:normal;color:#9a9a9a;transform:scaleX(0.477)">%</div>
<div class="t" style="left:451.5px;top:311.3px;font-size:9px;font-weight:bold;font-style:normal;color:#1a1a1a;transform:scaleX(0.690)">Walls</div>
<div class="t" style="left:432.6px;top:328.0px;font-size:8px;font-weight:normal;font-style:italic;color:#333;transform:scaleX(0.617)">Wall Thickness</div>
<div class="t" style="left:555.2px;top:327.8px;font-size:8px;font-weight:normal;font-style:normal;color:#3a3a3a;transform:scaleX(0.720)">0.8</div>
<div class="t" style="left:602.4px;top:327.8px;font-size:8px;font-weight:normal;font-style:normal;color:#a0a0a0;transform:scaleX(0.690)">mm</div>
<div class="t" style="left:440.8px;top:345.2px;font-size:8px;font-weight:normal;font-style:normal;color:#333;transform:scaleX(0.678)">Wall Line Count</div>
<div class="t" style="left:555.2px;top:345.0px;font-size:8px;font-weight:normal;font-style:normal;color:#3a3a3a;transform:scaleX(0.720)">1</div>
<div class="t" style="left:432.6px;top:362.3px;font-size:8px;font-weight:normal;font-style:normal;color:#333;transform:scaleX(0.688)">Horizontal Expansion</div>
<div class="t" style="left:555.2px;top:362.1px;font-size:8px;font-weight:normal;font-style:normal;color:#3a3a3a;transform:scaleX(0.720)">0.0</div>
<div class="t" style="left:602.4px;top:362.1px;font-size:8px;font-weight:normal;font-style:normal;color:#a0a0a0;transform:scaleX(0.690)">mm</div>
<div class="t" style="left:432.6px;top:379.5px;font-size:8px;font-weight:normal;font-style:italic;color:#333;transform:scaleX(0.630)">Z Seam Alignment</div>
<div class="t" style="left:555.2px;top:379.3px;font-size:8px;font-weight:normal;font-style:normal;color:#3a3a3a;transform:scaleX(0.720)">Random</div>
<div class="t" style="left:451.5px;top:397.2px;font-size:9px;font-weight:bold;font-style:normal;color:#1a1a1a;transform:scaleX(0.692)">Top/Bottom</div>
<div class="t" style="left:432.6px;top:413.9px;font-size:8px;font-weight:normal;font-style:normal;color:#333;transform:scaleX(0.684)">Top/Bottom Thickness</div>
<div class="t" style="left:555.2px;top:413.7px;font-size:8px;font-weight:normal;font-style:normal;color:#3a3a3a;transform:scaleX(0.720)">0.8</div>
<div class="t" style="left:602.4px;top:413.7px;font-size:8px;font-weight:normal;font-style:normal;color:#a0a0a0;transform:scaleX(0.690)">mm</div>
<div class="t" style="left:440.8px;top:431.0px;font-size:8px;font-weight:normal;font-style:italic;color:#333;transform:scaleX(0.610)">Top Thickness</div>
<div class="t" style="left:555.2px;top:430.8px;font-size:8px;font-weight:normal;font-style:normal;color:#3a3a3a;transform:scaleX(0.720)">0.0</div>
<div class="t" style="left:602.4px;top:430.8px;font-size:8px;font-weight:normal;font-style:normal;color:#d9a070;transform:scaleX(0.690)">mm</div>
<div class="t" style="left:436.6px;top:454.5px;font-size:9px;font-weight:normal;font-style:normal;color:#196ef0;transform:scaleX(0.709)">Recommended</div>
<div class="t" style="left:521.0px;top:472.9px;font-size:6px;font-weight:normal;font-style:normal;color:#aaa;transform:scaleX(0.798)">...</div>
<div class="t" style="left:523.2px;top:551.9px;font-size:9px;font-weight:bold;font-style:normal;color:#111;transform:scaleX(0.675)">2 hours 35 minutes</div>
<div class="t" style="left:523.2px;top:573.9px;font-size:8.5px;font-weight:normal;font-style:normal;color:#333;transform:scaleX(0.611)">45g · 15.24m</div>
<div class="t" style="left:555.8px;top:596.9px;font-size:9px;font-weight:normal;font-style:normal;color:#fff;transform:scaleX(0.649)">Save to Disk</div>
<div class="t" style="left:491.8px;top:586.1px;font-size:7px;font-weight:normal;font-style:normal;color:#fff;transform:scaleX(0.640)">1</div>
</body></html>
